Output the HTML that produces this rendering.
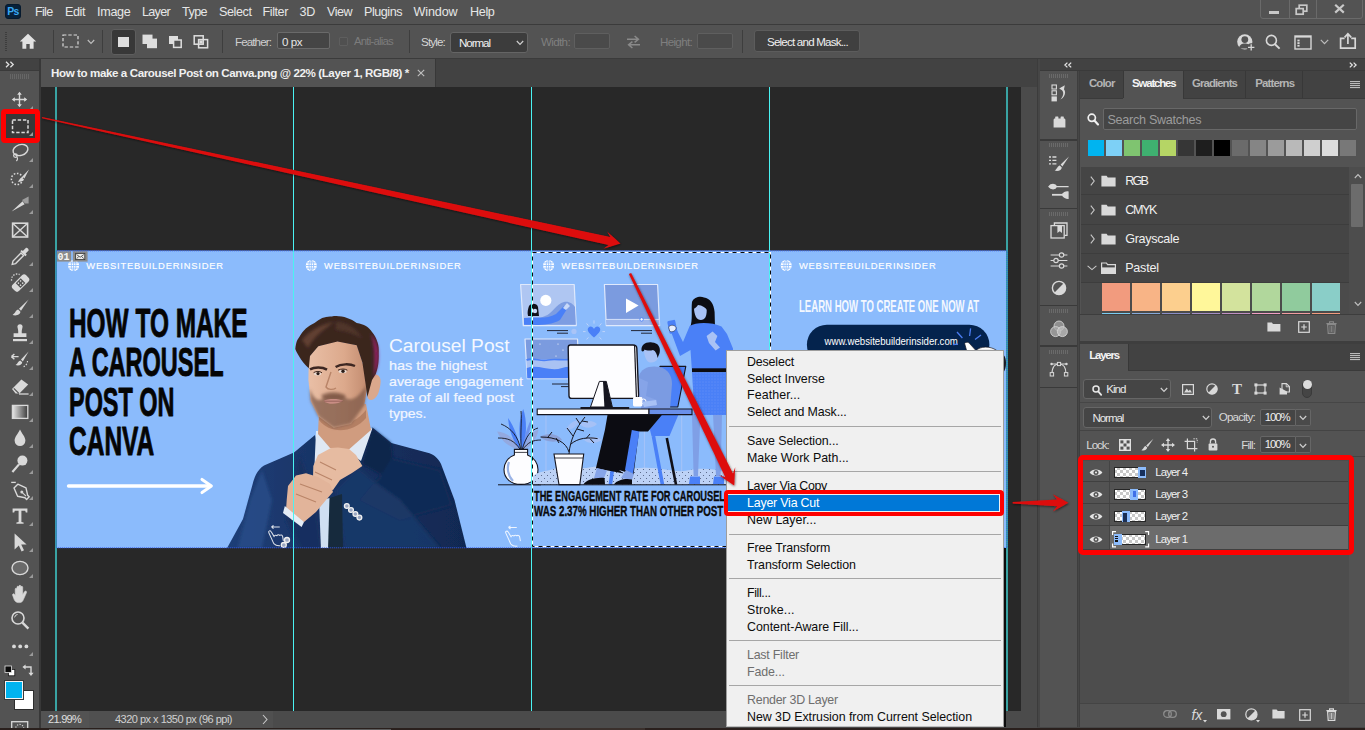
<!DOCTYPE html>
<html><head><meta charset="utf-8">
<style>
*{box-sizing:border-box;margin:0;padding:0}
html,body{width:1365px;height:730px;overflow:hidden;background:#535353;font-family:"Liberation Sans",sans-serif;}
.a{position:absolute}
#root{position:absolute;left:0;top:0;width:1365px;height:730px;overflow:hidden;background:#535353;color:#dcdcdc;font-size:13px}
.t{position:absolute;white-space:nowrap;line-height:1}
svg{position:absolute;overflow:visible}
</style></head><body>
<div id="root">
<!-- sec_top -->
<div class="a" style="left:0px;top:0px;width:1365px;height:24px;background:#535353;"></div>
<div class="a" style="left:5px;top:4px;width:16px;height:15px;background:#08213a;border-radius:3px;border:1px solid #061a2e"></div>
<div class="t" style="left:7.20px;top:7.00px;font-size:10.4px;color:#39a9f5;letter-spacing:-0.560px;font-weight:bold;">Ps</div>
<div class="t" style="left:35.00px;top:5.63px;font-size:12.6px;color:#e6e6e6;letter-spacing:-0.701px;">File</div>
<div class="t" style="left:65.00px;top:5.63px;font-size:12.6px;color:#e6e6e6;letter-spacing:-0.428px;">Edit</div>
<div class="t" style="left:97.00px;top:5.63px;font-size:12.6px;color:#e6e6e6;letter-spacing:-0.304px;">Image</div>
<div class="t" style="left:142.00px;top:5.63px;font-size:12.6px;color:#e6e6e6;letter-spacing:-0.704px;">Layer</div>
<div class="t" style="left:182.00px;top:5.63px;font-size:12.6px;color:#e6e6e6;letter-spacing:-0.579px;">Type</div>
<div class="t" style="left:219.00px;top:5.63px;font-size:12.6px;color:#e6e6e6;letter-spacing:-0.420px;">Select</div>
<div class="t" style="left:262.50px;top:5.63px;font-size:12.6px;color:#e6e6e6;letter-spacing:-0.417px;">Filter</div>
<div class="t" style="left:299.50px;top:5.63px;font-size:12.6px;color:#e6e6e6;letter-spacing:-0.303px;">3D</div>
<div class="t" style="left:327.00px;top:5.63px;font-size:12.6px;color:#e6e6e6;letter-spacing:-0.521px;">View</div>
<div class="t" style="left:364.00px;top:5.63px;font-size:12.6px;color:#e6e6e6;letter-spacing:-0.475px;">Plugins</div>
<div class="t" style="left:413.50px;top:5.63px;font-size:12.6px;color:#e6e6e6;letter-spacing:-0.136px;">Window</div>
<div class="t" style="left:470.00px;top:5.63px;font-size:12.6px;color:#e6e6e6;letter-spacing:-0.353px;">Help</div>
<div class="a" style="left:1260px;top:-3px;width:103px;height:22px;border:1px solid #6a6a6a;border-radius:3px"></div>
<div class="a" style="left:1288.5px;top:0px;width:1px;height:18px;background:#6a6a6a;"></div>
<div class="a" style="left:1315.5px;top:0px;width:1px;height:18px;background:#6a6a6a;"></div>
<div class="a" style="left:1269px;top:11px;width:10px;height:2.6px;background:#c8c8c8;"></div>
<svg style="left:1295px;top:4px" width="14" height="12" viewBox="0 0 14 12"><rect x="4.2" y="1.2" width="7.6" height="6" fill="none" stroke="#c8c8c8" stroke-width="1.7"/><rect x="1.2" y="4.6" width="7" height="5.6" fill="#535353" stroke="#c8c8c8" stroke-width="1.7"/></svg>
<svg style="left:1334px;top:4px" width="12" height="10" viewBox="0 0 12 10"><path d="M1.2 0.8L9.8 8.6M9.8 0.8L1.2 8.6" stroke="#c8c8c8" stroke-width="2.2" fill="none"/></svg>
<div class="a" style="left:0px;top:24px;width:1365px;height:1px;background:#3b3b3b;"></div>
<div class="a" style="left:0px;top:58px;width:1365px;height:1px;background:#3b3b3b;"></div>
<div class="a" style="left:5px;top:32px;width:2px;height:19px;background:repeating-linear-gradient(#3d3d3d 0 1px,transparent 1px 2px)"></div>
<svg style="left:19px;top:33px" width="18" height="17" viewBox="0 0 18 17"><path d="M9 0.8L0.8 8.6H3.4V15.8H7.3V11H10.7V15.8H14.6V8.6H17.2Z" fill="#e2e2e2"/></svg>
<div class="a" style="left:53px;top:30px;width:1px;height:23px;background:#3e3e3e;"></div>
<svg style="left:62px;top:34px" width="17" height="14" viewBox="0 0 17 14"><rect x="1" y="1" width="15" height="12" fill="none" stroke="#dcdcdc" stroke-width="1.2" stroke-dasharray="3.4 1.9"/></svg>
<svg style="left:87px;top:39px" width="8" height="6" viewBox="0 0 8 6"><path d="M0.8 1L4 4.4L7.2 1" stroke="#bdbdbd" stroke-width="1.2" fill="none"/></svg>
<div class="a" style="left:102px;top:30px;width:1px;height:23px;background:#3e3e3e;"></div>
<div class="a" style="left:111px;top:29px;width:25px;height:26px;background:#383838;border-radius:3px;border:1px solid #5e5e5e"></div>
<div class="a" style="left:118px;top:37px;width:11px;height:10px;background:#dedede;"></div>
<svg style="left:142px;top:34px" width="16" height="15" viewBox="0 0 16 15"><rect x="0.5" y="0.6" width="10" height="9.4" fill="#dedede"/><rect x="5" y="4.6" width="10" height="9.6" fill="#dedede"/></svg>
<svg style="left:168px;top:34px" width="15" height="15" viewBox="0 0 15 15"><rect x="1" y="2" width="9" height="8" fill="#dedede"/><rect x="5.6" y="6" width="7.6" height="7.4" fill="#535353" stroke="#dedede" stroke-width="1.5"/></svg>
<svg style="left:193px;top:34px" width="16" height="15" viewBox="0 0 16 15"><rect x="1.2" y="1.8" width="9" height="8.4" fill="none" stroke="#dedede" stroke-width="1.5"/><rect x="5.6" y="5.6" width="9" height="8.2" fill="none" stroke="#dedede" stroke-width="1.5"/><rect x="6.4" y="6.4" width="3.2" height="3.2" fill="#dedede"/></svg>
<div class="a" style="left:222px;top:30px;width:1px;height:23px;background:#3e3e3e;"></div>
<div class="t" style="left:235.00px;top:35.98px;font-size:11.6px;color:#cfcfcf;letter-spacing:-0.900px;">Feather:</div>
<div class="a" style="left:277px;top:32px;width:53px;height:17px;background:#454545;border:1px solid #6a6a6a;border-radius:2px"></div>
<div class="t" style="left:282.00px;top:35.78px;font-size:11.6px;color:#e6e6e6;letter-spacing:-0.481px;">0 px</div>
<div class="a" style="left:339px;top:37px;width:9px;height:9px;border:1px solid #5e5e5e;border-radius:1px;background:#505050"></div>
<div class="t" style="left:354.00px;top:35.95px;font-size:11.4px;color:#7c7c7c;letter-spacing:-0.789px;">Anti-alias</div>
<div class="a" style="left:409px;top:30px;width:1px;height:23px;background:#3e3e3e;"></div>
<div class="t" style="left:421.00px;top:35.78px;font-size:11.6px;color:#d6d6d6;letter-spacing:-0.835px;">Style:</div>
<div class="a" style="left:450.4px;top:32px;width:77.2px;height:21px;background:#3c3c3c;border:1px solid #656565;border-radius:3px"></div>
<div class="t" style="left:459.00px;top:36.58px;font-size:11.6px;color:#f0f0f0;letter-spacing:-1.064px;">Normal</div>
<svg style="left:516px;top:40px" width="8" height="6" viewBox="0 0 8 6"><path d="M0.8 1L4 4.4L7.2 1" stroke="#cfcfcf" stroke-width="1.2" fill="none"/></svg>
<div class="t" style="left:541.00px;top:35.78px;font-size:11.6px;color:#7f7f7f;letter-spacing:-0.646px;">Width:</div>
<div class="a" style="left:574px;top:33px;width:36px;height:16px;background:#4a4a4a;border:1px solid #5f5f5f;border-radius:2px"></div>
<svg style="left:626px;top:35px" width="15" height="14" viewBox="0 0 15 14"><path d="M1 4.2H11.5M8.6 1L12.4 4.2L8.6 7.4" stroke="#8a8a8a" stroke-width="1.5" fill="none"/><path d="M14 9.8H3.5M6.4 6.6L2.6 9.8L6.4 13" stroke="#8a8a8a" stroke-width="1.5" fill="none"/></svg>
<div class="t" style="left:660.00px;top:35.78px;font-size:11.6px;color:#7f7f7f;letter-spacing:-0.679px;">Height:</div>
<div class="a" style="left:697px;top:33px;width:36px;height:16px;background:#4a4a4a;border:1px solid #5f5f5f;border-radius:2px"></div>
<div class="a" style="left:742px;top:30px;width:1px;height:23px;background:#3e3e3e;"></div>
<div class="a" style="left:754px;top:30px;width:106px;height:22px;background:#404040;border:1px solid #5c5c5c;border-radius:3px"></div>
<div class="t" style="left:767.00px;top:35.78px;font-size:11.6px;color:#f0f0f0;letter-spacing:-0.801px;">Select and Mask...</div>
<svg style="left:1236px;top:33px" width="20" height="19" viewBox="0 0 20 19"><circle cx="8.8" cy="8.8" r="7.6" fill="#d8d8d8"/><circle cx="8.8" cy="6.6" r="3.4" fill="#535353"/><path d="M2.8 15.4C3.6 11.4 6 10.4 8.8 10.4S14 11.4 14.8 15.4" fill="#535353"/><circle cx="15.2" cy="14.4" r="4.2" fill="#535353"/><path d="M15.2 11.2V17.6M12 14.4H18.4" stroke="#d8d8d8" stroke-width="1.3"/></svg>
<svg style="left:1265px;top:34px" width="16" height="16" viewBox="0 0 16 16"><circle cx="6.4" cy="6.4" r="5" fill="none" stroke="#d8d8d8" stroke-width="1.6"/><path d="M10 10.2L14.6 14.6" stroke="#d8d8d8" stroke-width="2"/></svg>
<svg style="left:1294px;top:35px" width="18" height="15" viewBox="0 0 18 15"><rect x="1" y="1" width="16" height="13" fill="none" stroke="#d8d8d8" stroke-width="1.4"/><rect x="1" y="1" width="16" height="1.6" fill="#d8d8d8"/><rect x="3.4" y="4.6" width="2.2" height="1.8" fill="#d8d8d8"/><rect x="3.4" y="7.2" width="2.2" height="1.8" fill="#d8d8d8"/><rect x="3.4" y="9.8" width="2.2" height="1.8" fill="#d8d8d8"/></svg>
<svg style="left:1320px;top:39px" width="9" height="6" viewBox="0 0 9 6"><path d="M0.8 0.8L4.5 4.6L8.2 0.8" stroke="#bdbdbd" stroke-width="1.2" fill="none"/></svg>
<svg style="left:1339px;top:32px" width="18" height="18" viewBox="0 0 18 18"><path d="M5.6 6.4H1.6V16.2H16.2V6.4H12.2" fill="none" stroke="#d8d8d8" stroke-width="1.7"/><path d="M8.9 12V2.2M5.6 5.4L8.9 1.8L12.2 5.4" fill="none" stroke="#d8d8d8" stroke-width="1.7"/></svg>
<div class="a" style="left:41px;top:59px;width:997px;height:28px;background:#424242;"></div>
<div class="a" style="left:41px;top:59px;width:394px;height:28px;background:#535353;"></div>
<div class="a" style="left:435px;top:59px;width:1px;height:28px;background:#383838;"></div>
<div class="t" style="left:51.00px;top:67.18px;font-size:11.6px;color:#f0f0f0;letter-spacing:-0.408px;font-weight:bold;">How to make a Carousel Post on Canva.png @ 22% (Layer 1, RGB/8) *</div>
<svg style="left:417px;top:69px" width="8" height="8" viewBox="0 0 8 8"><path d="M0.8 0.8L7.2 7.2M7.2 0.8L0.8 7.2" stroke="#c0c0c0" stroke-width="1.1" fill="none"/></svg>
<!-- sec_tools -->
<div class="a" style="left:0px;top:59px;width:41px;height:671px;background:#535353;"></div>
<div class="a" style="left:39px;top:59px;width:2px;height:671px;background:#383838;"></div>
<div class="a" style="left:0px;top:59px;width:39px;height:11px;background:#424242;"></div>
<div class="a" style="left:0px;top:70px;width:39px;height:1px;background:#3a3a3a;"></div>
<svg style="left:5px;top:61px" width="10" height="7" viewBox="0 0 10 7"><path d="M1 0.8L3.8 3.5L1 6.2M5.4 0.8L8.2 3.5L5.4 6.2" stroke="#e0e0e0" stroke-width="1.3" fill="none"/></svg>
<div class="a" style="left:10px;top:74px;width:20px;height:5px;background:repeating-linear-gradient(90deg,#666 0 1px,transparent 1px 2px)"></div>
<div class="a" style="left:3px;top:111px;width:35px;height:30px;background:#383838;"></div>
<svg style="left:10.75px;top:91.15px" width="17" height="17" viewBox="0 0 22 22"><path d="M11 2.6V19.4M2.6 11H19.4" stroke="#d9d9d9" stroke-width="1.8"/><path d="M11 1L14 5H8ZM11 21L14 17H8ZM1 11L5 8V14ZM21 11L17 8V14Z" fill="#d9d9d9"/></svg>
<svg style="left:29px;top:106.4px" width="4" height="4" viewBox="0 0 4 4"><path d="M4 0V4H0Z" fill="#9a9a9a"/></svg>
<svg style="left:8.5px;top:114.9px" width="22" height="22" viewBox="0 0 22 22"><rect x="3.5" y="5" width="15.5" height="12.5" fill="none" stroke="#d9d9d9" stroke-width="1.5" stroke-dasharray="3.4 1.8"/></svg>
<svg style="left:29px;top:132.4px" width="4" height="4" viewBox="0 0 4 4"><path d="M4 0V4H0Z" fill="#9a9a9a"/></svg>
<svg style="left:8.5px;top:140.9px" width="22" height="22" viewBox="0 0 22 22"><ellipse cx="11.5" cy="9" rx="7.6" ry="5.4" transform="rotate(-18 11.5 9)" fill="none" stroke="#d9d9d9" stroke-width="1.4"/><circle cx="6.4" cy="14.6" r="1.8" fill="none" stroke="#d9d9d9" stroke-width="1.2"/><path d="M7.6 16C9 17 8.6 18.8 7.4 20" fill="none" stroke="#d9d9d9" stroke-width="1.2"/></svg>
<svg style="left:29px;top:158.4px" width="4" height="4" viewBox="0 0 4 4"><path d="M4 0V4H0Z" fill="#9a9a9a"/></svg>
<svg style="left:8.5px;top:166.9px" width="22" height="22" viewBox="0 0 22 22"><circle cx="8" cy="12" r="5.6" fill="none" stroke="#d9d9d9" stroke-width="1.5" stroke-dasharray="1.6 1.6"/><path d="M20 2.6L13.4 9.6L15.4 11.4Z" fill="#d9d9d9"/><path d="M12.6 10.4C10.6 10.8 10.6 13.4 8.8 14.4C11.6 15.4 14.6 14 14.8 12.2Z" fill="#d9d9d9"/></svg>
<svg style="left:29px;top:184.4px" width="4" height="4" viewBox="0 0 4 4"><path d="M4 0V4H0Z" fill="#9a9a9a"/></svg>
<svg style="left:8.5px;top:192.9px" width="22" height="22" viewBox="0 0 22 22"><path d="M2.6 18.6L13.6 8.2L15.6 11.2Z" fill="#d9d9d9"/><path d="M13 7L19.6 3.6L19.6 10.6L16 10.6Z" fill="#9d9d9d"/></svg>
<svg style="left:29px;top:210.4px" width="4" height="4" viewBox="0 0 4 4"><path d="M4 0V4H0Z" fill="#9a9a9a"/></svg>
<svg style="left:8.5px;top:218.9px" width="22" height="22" viewBox="0 0 22 22"><rect x="3.6" y="4.2" width="15" height="13.8" fill="none" stroke="#d9d9d9" stroke-width="1.6"/><path d="M3.6 4.2L18.6 18M18.6 4.2L3.6 18" stroke="#d9d9d9" stroke-width="1.4"/></svg>
<svg style="left:8.5px;top:244.9px" width="22" height="22" viewBox="0 0 22 22"><path d="M3.2 19.4L4 16L12 8L14.6 10.6L6.6 18.6Z" fill="none" stroke="#d9d9d9" stroke-width="1.4"/><path d="M11.4 6.2L16.4 11.2L17.8 9.8L16.6 8.6L19.4 5.8C20.4 4.8 18 1.8 16.6 3.2L13.8 6L12.8 5Z" fill="#d9d9d9"/></svg>
<svg style="left:29px;top:262.4px" width="4" height="4" viewBox="0 0 4 4"><path d="M4 0V4H0Z" fill="#9a9a9a"/></svg>
<svg style="left:8.5px;top:270.9px" width="22" height="22" viewBox="0 0 22 22"><g transform="rotate(-45 11.5 12)"><rect x="2" y="7.6" width="19" height="9" rx="3" fill="#d9d9d9"/><rect x="8" y="8.8" width="7" height="6.6" fill="#535353"/><circle cx="10" cy="10.6" r="0.8" fill="#d9d9d9"/><circle cx="13" cy="10.6" r="0.8" fill="#d9d9d9"/><circle cx="10" cy="13.6" r="0.8" fill="#d9d9d9"/><circle cx="13" cy="13.6" r="0.8" fill="#d9d9d9"/></g><path d="M2.6 9.6A5.6 5.6 0 0 1 10.6 3.6" fill="none" stroke="#d9d9d9" stroke-width="1.3" stroke-dasharray="1.4 1.4"/></svg>
<svg style="left:29px;top:288.4px" width="4" height="4" viewBox="0 0 4 4"><path d="M4 0V4H0Z" fill="#9a9a9a"/></svg>
<svg style="left:8.5px;top:296.9px" width="22" height="22" viewBox="0 0 22 22"><path d="M19.6 2.4L10 11.8L12 13.8Z" fill="#d9d9d9"/><path d="M9.2 12.6C6.8 13 6.6 16 3.6 18C7.6 19.4 11.4 17.4 11.4 14.8Z" fill="#d9d9d9"/></svg>
<svg style="left:29px;top:314.4px" width="4" height="4" viewBox="0 0 4 4"><path d="M4 0V4H0Z" fill="#9a9a9a"/></svg>
<svg style="left:8.5px;top:322.9px" width="22" height="22" viewBox="0 0 22 22"><path d="M8.6 4.8A2.6 2.6 0 1 1 13.4 4.8C13 6.4 12.6 8 12.8 10.2H17.4V14H4.6V10.2H9.2C9.4 8 9 6.4 8.6 4.8Z" fill="#d9d9d9"/><rect x="4" y="16" width="14" height="2.2" fill="#d9d9d9"/></svg>
<svg style="left:29px;top:340.4px" width="4" height="4" viewBox="0 0 4 4"><path d="M4 0V4H0Z" fill="#9a9a9a"/></svg>
<svg style="left:8.5px;top:348.9px" width="22" height="22" viewBox="0 0 22 22"><path d="M19.6 2.6L12 10.6L13.8 12.4Z" fill="#d9d9d9"/><path d="M11.2 11.4C9.2 11.8 9 14.4 6.6 16C10 17.2 13.2 15.4 13.2 13.2Z" fill="#d9d9d9"/><path d="M2.4 7.6H9.6M2.4 7.6L5.4 5M2.4 7.6L5.4 10.2" stroke="#d9d9d9" stroke-width="1.4" fill="none"/><path d="M14.6 17.6A6 6 0 0 0 18.4 11" fill="none" stroke="#d9d9d9" stroke-width="1.2" stroke-dasharray="1.4 1.4"/></svg>
<svg style="left:29px;top:366.4px" width="4" height="4" viewBox="0 0 4 4"><path d="M4 0V4H0Z" fill="#9a9a9a"/></svg>
<svg style="left:8.5px;top:374.9px" width="22" height="22" viewBox="0 0 22 22"><path d="M3 14L12.4 4.6L19.2 9.6L10.4 18.6H6.6Z" fill="#d9d9d9"/><path d="M4.8 13.4L9.8 18.4" stroke="#535353" stroke-width="1.2"/><path d="M7.4 11L13 16.2" stroke="#535353" stroke-width="0"/><path d="M10 19H19.6" stroke="#d9d9d9" stroke-width="1.3"/></svg>
<svg style="left:29px;top:392.4px" width="4" height="4" viewBox="0 0 4 4"><path d="M4 0V4H0Z" fill="#9a9a9a"/></svg>
<svg style="left:8.5px;top:400.9px" width="22" height="22" viewBox="0 0 22 22"><defs><linearGradient id="gg" x1="0" x2="1"><stop offset="0" stop-color="#e8e8e8"/><stop offset="1" stop-color="#3c3c3c"/></linearGradient></defs><rect x="3.4" y="4.4" width="15.4" height="13" fill="url(#gg)" stroke="#d9d9d9" stroke-width="1.3"/></svg>
<svg style="left:29px;top:418.4px" width="4" height="4" viewBox="0 0 4 4"><path d="M4 0V4H0Z" fill="#9a9a9a"/></svg>
<svg style="left:8.5px;top:426.9px" width="22" height="22" viewBox="0 0 22 22"><path d="M11 2.6C13 7 16.4 10 16.4 13.6A5.4 5.4 0 0 1 5.6 13.6C5.6 10 9 7 11 2.6Z" fill="#d9d9d9"/></svg>
<svg style="left:29px;top:444.4px" width="4" height="4" viewBox="0 0 4 4"><path d="M4 0V4H0Z" fill="#9a9a9a"/></svg>
<svg style="left:8.5px;top:452.9px" width="22" height="22" viewBox="0 0 22 22"><circle cx="13.4" cy="7.6" r="5" fill="#d9d9d9"/><path d="M10 11.4L3.4 19" stroke="#d9d9d9" stroke-width="2.2"/></svg>
<svg style="left:29px;top:470.4px" width="4" height="4" viewBox="0 0 4 4"><path d="M4 0V4H0Z" fill="#9a9a9a"/></svg>
<svg style="left:8.5px;top:478.9px" width="22" height="22" viewBox="0 0 22 22"><path d="M8.8 5.2L17 8.8L18.6 16.2L20.2 17.8L17.6 20.4L16 18.8L8.6 17.2L5 9Z" fill="none" stroke="#d9d9d9" stroke-width="1.4" stroke-linejoin="round"/><circle cx="12.8" cy="13" r="1.5" fill="#d9d9d9"/><path d="M13.6 13.8L17 17.2" stroke="#d9d9d9" stroke-width="1.1"/><path d="M2.2 3.4H6.8" stroke="#d9d9d9" stroke-width="1.3"/></svg>
<svg style="left:29px;top:496.4px" width="4" height="4" viewBox="0 0 4 4"><path d="M4 0V4H0Z" fill="#9a9a9a"/></svg>
<svg style="left:8.5px;top:504.9px" width="22" height="22" viewBox="0 0 22 22"><path d="M3.6 3.6H18.4V7.4H16.8L16.2 5.8H12.4V17L14.6 17.6V18.8H7.4V17.6L9.6 17V5.8H5.8L5.2 7.4H3.6Z" fill="#d9d9d9"/></svg>
<svg style="left:29px;top:522.4px" width="4" height="4" viewBox="0 0 4 4"><path d="M4 0V4H0Z" fill="#9a9a9a"/></svg>
<svg style="left:8.5px;top:530.9px" width="22" height="22" viewBox="0 0 22 22"><path d="M5.6 2.4V18.4L9.8 14.4L12.6 20.4L15 19.2L12.2 13.4H17.6Z" fill="#d9d9d9"/></svg>
<svg style="left:29px;top:548.4px" width="4" height="4" viewBox="0 0 4 4"><path d="M4 0V4H0Z" fill="#9a9a9a"/></svg>
<svg style="left:8.5px;top:556.9px" width="22" height="22" viewBox="0 0 22 22"><ellipse cx="11" cy="11" rx="8" ry="6.6" fill="#6a6a6a" stroke="#d9d9d9" stroke-width="1.4"/></svg>
<svg style="left:29px;top:574.4px" width="4" height="4" viewBox="0 0 4 4"><path d="M4 0V4H0Z" fill="#9a9a9a"/></svg>
<svg style="left:8.5px;top:582.9px" width="22" height="22" viewBox="0 0 22 22"><path d="M6.2 12.6V6.2C6.2 4.8 8 4.8 8 6.2V10.4V4.2C8 2.8 9.9 2.8 9.9 4.2V10V3.4C9.9 2 11.8 2 11.8 3.4V10V4.4C11.8 3 13.7 3 13.7 4.4V11.4L15.6 8.6C16.4 7.4 18.2 8.4 17.4 9.8L14.4 16.6C13.6 18.6 12.6 19.6 10.6 19.6H9.4C7.4 19.6 6 18.4 5.2 16.6L3.6 12.2C3.2 10.8 5 10.2 5.6 11.6Z" fill="#d9d9d9" stroke="#d9d9d9" stroke-width="0.6" stroke-linejoin="round"/></svg>
<svg style="left:8.5px;top:608.9px" width="22" height="22" viewBox="0 0 22 22"><circle cx="9" cy="9" r="6" fill="none" stroke="#d9d9d9" stroke-width="1.6"/><path d="M13.4 13.6L19.4 19.6" stroke="#d9d9d9" stroke-width="2.4"/><path d="M5.6 8.4A3.6 3.6 0 0 1 8.6 5.4" stroke="#d9d9d9" stroke-width="1" fill="none"/></svg>
<svg style="left:8.5px;top:634.9px" width="22" height="22" viewBox="0 0 22 22"><circle cx="5" cy="11.4" r="1.9" fill="#d9d9d9"/><circle cx="11.2" cy="11.4" r="1.9" fill="#d9d9d9"/><circle cx="17.4" cy="11.4" r="1.9" fill="#d9d9d9"/></svg>
<svg style="left:29px;top:652.4px" width="4" height="4" viewBox="0 0 4 4"><path d="M4 0V4H0Z" fill="#9a9a9a"/></svg>
<svg style="left:4.4px;top:664.6px" width="12" height="12" viewBox="0 0 12 12"><rect x="4.4" y="4.4" width="6.4" height="6.4" fill="#fff" stroke="#1a1a1a" stroke-width="0.8"/><rect x="1" y="1" width="6.4" height="6.4" fill="#0a0a0a" stroke="#e0e0e0" stroke-width="0.8"/></svg>
<svg style="left:21.6px;top:664.2px" width="12" height="12" viewBox="0 0 12 12"><path d="M2.6 3H9V9.6" fill="none" stroke="#d9d9d9" stroke-width="1.4"/><path d="M0.4 3L3.6 0.4V5.6ZM9 12L6.4 8.8H11.6Z" fill="#d9d9d9"/></svg>
<div class="a" style="left:14.2px;top:690px;width:19.5px;height:19.5px;background:#fff;border:1px solid #2e2e2e"></div>
<div class="a" style="left:4.1px;top:680.2px;width:19.7px;height:19.5px;background:#00b3ef;border:1px solid #383838;box-shadow:inset 0 0 0 1px #f4f4f4"></div>
<svg style="left:11px;top:721px" width="17.4" height="10" viewBox="0 0 17.4 10"><rect x="0.7" y="0.7" width="16" height="13" fill="none" stroke="#d9d9d9" stroke-width="1.3"/><circle cx="8.7" cy="7.4" r="4" fill="none" stroke="#d9d9d9" stroke-width="1.2" stroke-dasharray="1.2 1.4"/></svg>
<!-- sec_canvas -->
<div class="a" style="left:41px;top:87px;width:980px;height:624px;background:#282828;"></div>
<div class="a" style="left:1021px;top:87px;width:17px;height:624px;background:#4b4b4b;"></div>
<div class="a" style="left:41px;top:711px;width:997px;height:17px;background:#4b4b4b;"></div>
<div class="a" style="left:41px;top:711px;width:48px;height:17px;background:#535353;"></div>
<div class="a" style="left:89px;top:711px;width:184px;height:17px;background:#505050;"></div>
<div class="t" style="left:48.00px;top:714.39px;font-size:11px;color:#e0e0e0;letter-spacing:-0.718px;">21.99%</div>
<div class="t" style="left:115.00px;top:714.39px;font-size:11px;color:#d0d0d0;letter-spacing:-0.510px;">4320 px x 1350 px (96 ppi)</div>
<svg style="left:262px;top:713.8px" width="6" height="11" viewBox="0 0 6 11"><path d="M1 1L5 5.5L1 10" stroke="#c8c8c8" stroke-width="1.1" fill="none"/></svg>
<svg style="left:0;top:0" width="1365" height="730" viewBox="0 0 1365 730" font-family="Liberation Sans, sans-serif">
<defs><clipPath id="cv"><rect x="41" y="87" width="980" height="624"/></clipPath><pattern id="dots" width="6" height="6" patternUnits="userSpaceOnUse"><rect width="6" height="6" fill="#bdd2f6"/><circle cx="1.5" cy="1.5" r="0.55" fill="#4b5a7a"/><circle cx="4.5" cy="4.5" r="0.55" fill="#4b5a7a"/></pattern><pattern id="sk" width="3" height="3" patternUnits="userSpaceOnUse"><rect width="3" height="3" fill="#4a80f7"/><circle cx="1" cy="1" r="0.45" fill="#86a8f8"/></pattern></defs>
<g clip-path="url(#cv)">
<rect x="56" y="250.6" width="951.4" height="297.4" fill="#8bbbfc"/>
<g><circle cx="73.6" cy="265.5" r="5.5" fill="#fff"/><g fill="none" stroke="#8bbbfc" stroke-width="0.8"><ellipse cx="73.6" cy="265.5" rx="2.3" ry="5"/><path d="M68.1 265.5H79.1M69 262.9H78.2M69 268.1H78.2M73.6 260V271"/></g></g><text x="86.3" y="268.7" textLength="136.8" lengthAdjust="spacing" font-size="9.4" fill="#fff"  stroke="#fff" stroke-width="0.15">WEBSITEBUILDERINSIDER</text>
<text x="69" y="336.6" textLength="178.5" lengthAdjust="spacingAndGlyphs" font-size="40.6" fill="#050505" font-weight="bold" stroke="#050505" stroke-width="0.9" stroke-linejoin="round">HOW TO MAKE</text>
<text x="69" y="376" textLength="154.5" lengthAdjust="spacingAndGlyphs" font-size="40.6" fill="#050505" font-weight="bold" stroke="#050505" stroke-width="0.9" stroke-linejoin="round">A CAROUSEL</text>
<text x="69" y="415.5" textLength="105.5" lengthAdjust="spacingAndGlyphs" font-size="40.6" fill="#050505" font-weight="bold" stroke="#050505" stroke-width="0.9" stroke-linejoin="round">POST ON</text>
<text x="69" y="455" textLength="85.3" lengthAdjust="spacingAndGlyphs" font-size="40.6" fill="#050505" font-weight="bold" stroke="#050505" stroke-width="0.9" stroke-linejoin="round">CANVA</text>
<path d="M68.5 486H210" stroke="#fff" stroke-width="3.4" stroke-linecap="round"/><path d="M202 479.4L211.4 486L202 492.6" fill="none" stroke="#fff" stroke-width="3" stroke-linecap="round" stroke-linejoin="round"/>
<defs><filter id="soft" x="-5%" y="-5%" width="110%" height="110%"><feGaussianBlur stdDeviation="0.7"/></filter><filter id="soft2" x="-10%" y="-10%" width="120%" height="120%"><feGaussianBlur stdDeviation="1.6"/></filter><linearGradient id="suitg" x1="0" x2="1"><stop offset="0" stop-color="#1f3f78"/><stop offset="0.45" stop-color="#173263"/><stop offset="1" stop-color="#112852"/></linearGradient><linearGradient id="faceg" x1="0" x2="1"><stop offset="0" stop-color="#e9bfa6"/><stop offset="0.6" stop-color="#dca98c"/><stop offset="1" stop-color="#c18a6e"/></linearGradient><clipPath id="imgclip"><rect x="56" y="250.6" width="951.4" height="297.4"/></clipPath></defs>
<g clip-path="url(#imgclip)"><g filter="url(#soft)">
<path d="M315 435L294 452.5L264 465.5C257 470 254 478 252.4 485L243 519L226 550H467L454.5 500L441 464C438 458 434 455 429.5 453.3L391.4 443L372.4 427.6L345 470L322 470Z" fill="url(#suitg)"/>
<g filter="url(#soft2)"><path d="M372 428L391 443L392.4 458L382 475L362 464Z" fill="#10254c"/><path d="M392 458L440 470L452 505L400 520L360 500L380 476Z" fill="#132a55" opacity="0.8"/><path d="M300 455L316 500L322 550H300L286 520Z" fill="#14305f" opacity="0.85"/><path d="M262 470L250 500L238 548L262 548L272 500Z" fill="#2a4f8c" opacity="0.7"/><path d="M336 490L358 468L372 480L400 500L440 548H345Z" fill="#1b3868" opacity="0.9"/></g>
<path d="M316 431L372.4 428.2L361 461L342 447L331 449L330.5 470L314.3 470Z" fill="#dfe8f4"/>
<path d="M319 500L330 498L329.5 550H321Z" fill="#cfdff2"/>
<path d="M329.5 498L342 494L343 550H328Z" fill="#152c3c"/>
<path d="M319 410L366 404L371 430L346 452L330 448L318 434Z" fill="#d09c7f"/>
<path d="M319 414C330 428 352 428 366 410L366 418C352 434 330 434 319 420Z" fill="#a87458" opacity="0.7"/>
<path d="M368 378C374 372 381 374 380.6 382C380 390 378 396 374 399C371 401 368 400 367.5 397Z" fill="#dba88c"/>
<path d="M308.8 357L318 346L337 341L357 345L362.4 362L368.2 382L364.3 404.7L351 424L333.7 427.7L318.3 416.2L310.7 401L308.4 380Z" fill="url(#faceg)"/>
<g filter="url(#soft2)"><path d="M309.6 388C313 398 318 402 322 399C328 394 340 394 346 398C352 402 360 396 367 384L364.3 405L351 424L333.7 428L318.3 416.4L310.7 401Z" fill="#7a5644" opacity="0.72"/><path d="M321 396C326 391 340 391 346 396L344 399H324Z" fill="#7a5442" opacity="0.8"/></g>
<path d="M323.5 401C328 398.4 338 398.4 343 400.6C338 404.6 328 405 323.5 401Z" fill="#c98d84"/><path d="M324 401.2H342.6" stroke="#8a5a52" stroke-width="0.8"/>
<path d="M331 372L326 387C328 390 333 390 336 388" stroke="#b98468" stroke-width="1.4" fill="none"/>
<path d="M310 369.4C314 367 322 366.6 327 369.6M335.6 367C341 363.6 350 363.6 355 366" stroke="#3d2820" stroke-width="2.4" fill="none"/>
<ellipse cx="317.6" cy="373.8" rx="3.6" ry="1.6" fill="#e9dcd4"/><ellipse cx="342.6" cy="371.4" rx="4" ry="1.7" fill="#e9dcd4"/><circle cx="318" cy="373.6" r="1.6" fill="#2a1c18"/><circle cx="343" cy="371.2" r="1.7" fill="#2a1c18"/>
<path d="M313.6 372.6C316 371 320 371 322 372.8M338 370.2C341 368.6 345 368.6 347.4 370.2" stroke="#3d2820" stroke-width="1" fill="none"/>
<path d="M295.3 349C296 343 297 340 299 337.6C303 330 308 326 314.5 323C320 318 326 316 331.8 316.5C340 315 350 318 356.7 323C364 324 369 327 372 332C377 338 379.5 346 378.7 353C379 362 378 368 375.8 374L372 380L367.4 397L365.6 384L362.4 362.5L356.7 345.3L337.5 341.4L318.3 346.2L310 356L308.8 368.3C304 364 298 356 295.3 349Z" fill="#3b261f"/>
<g filter="url(#soft2)"><path d="M302 340C310 330 322 324 334 322C326 328 314 336 308 348Z" fill="#6a4636" opacity="0.8"/><path d="M336 322C346 322 356 328 362 338C354 334 344 330 336 330Z" fill="#5a3a2c" opacity="0.7"/><path d="M371 334C378 342 380 352 377.6 366L373.6 378C375 362 375 346 371 334Z" fill="#a0206e" opacity="0.8"/></g>
<path d="M313.3 466L318 455L331 448L338 447.6L349 449L356 455L362.4 466L352 473L340 480L333 490L321 488L313 478Z" fill="#e6bba1"/>
<path d="M286.7 500L288 486L296 475.6L306 473.3L318 477L330 484L333 492L326 500L316 512L304 521.9L292 520L286 510Z" fill="#e2b49a"/>
<path d="M320 462L336 470M315 472L332 480M300 484L322 492M296 494L316 502" stroke="#b98468" stroke-width="1.1" fill="none"/>
<path d="M284.8 506L304 522L301.6 527L283 513Z" fill="#e4ecf6"/>
</g>
<circle cx="346.8" cy="506" r="2.4" fill="#9aa6c0" stroke="#f0f0f0" stroke-width="1.3"/>
<circle cx="351" cy="510" r="2.4" fill="#9aa6c0" stroke="#f0f0f0" stroke-width="1.3"/>
<circle cx="355.4" cy="514" r="2.4" fill="#9aa6c0" stroke="#f0f0f0" stroke-width="1.3"/>
<circle cx="359.4" cy="517.6" r="2.4" fill="#9aa6c0" stroke="#f0f0f0" stroke-width="1.3"/>
<circle cx="287" cy="540" r="2.5" fill="#9aa6c0" stroke="#f0f0f0" stroke-width="1.3"/><circle cx="283.8" cy="545" r="2.5" fill="#9aa6c0" stroke="#f0f0f0" stroke-width="1.3"/>
</g>
<g transform="translate(275.6 535.6) scale(1.3)" fill="none" stroke="#fff" stroke-width="0.8" opacity="0.85"><path d="M-3.2 -6.6H3.2M-3.2 -6.6L-1.6 -7.8M-3.2 -6.6L-1.6 -5.4"/><path d="M-1.4 6.2L-5.2 -2.2C-5.8 -3.6 -4.2 -4.4 -3.4 -3L-1.2 0.6C-0.6 -0.4 0.4 -0.6 1 0C1.6 -0.8 2.6 -0.8 3.2 -0.2C4 -0.8 5 -0.4 5.4 0.6L6 4M-1.4 6.2C0 7.6 2 8 3.6 7.8"/></g>
<g><circle cx="311.3" cy="265.5" r="5.5" fill="#fff"/><g fill="none" stroke="#8bbbfc" stroke-width="0.8"><ellipse cx="311.3" cy="265.5" rx="2.3" ry="5"/><path d="M305.8 265.5H316.8M306.7 262.9H315.9M306.7 268.1H315.9M311.3 260V271"/></g></g><text x="324" y="268.7" textLength="136.8" lengthAdjust="spacing" font-size="9.4" fill="#fff"  stroke="#fff" stroke-width="0.15">WEBSITEBUILDERINSIDER</text>
<text x="389" y="351.9" textLength="120.5" lengthAdjust="spacingAndGlyphs" font-size="18.8" fill="#f4f8ff"  >Carousel Post</text>
<text x="389" y="369.9" textLength="98" lengthAdjust="spacingAndGlyphs" font-size="13.6" fill="#f2f6ff"  stroke="#f2f6ff" stroke-width="0.2">has the highest</text>
<text x="389" y="386.2" textLength="134" lengthAdjust="spacingAndGlyphs" font-size="13.6" fill="#f2f6ff"  stroke="#f2f6ff" stroke-width="0.2">average engagement</text>
<text x="389" y="402.3" textLength="125" lengthAdjust="spacingAndGlyphs" font-size="13.6" fill="#f2f6ff"  stroke="#f2f6ff" stroke-width="0.2">rate of all feed post</text>
<text x="389" y="417.9" textLength="37.5" lengthAdjust="spacingAndGlyphs" font-size="13.6" fill="#f2f6ff"  stroke="#f2f6ff" stroke-width="0.2">types.</text>
<g><path d="M523.2 409C527 420 527 436 522.4 450C518 436 518.6 420 523.2 409Z" fill="#4a80f7"/><path d="M497.2 431.4C507 432 516 440 520.6 450C510 448 501 441 497.2 431.4Z" fill="#93a9e0"/><path d="M538.5 429.6C531 432 525 440 522.6 450C531 447 537 439 538.5 429.6Z" fill="#93a9e0"/><path d="M508 418C514 426 518 438 520.6 450C513 442 509 430 508 418Z" fill="#4a80f7"/><path d="M533 416C531 428 527 440 522.6 450C524 438 527 426 533 416Z" fill="#6d92ee"/><path d="M521 450C518 436 511 428 501 424M521.4 450C520 434 522 420 521 411M522 450C526 436 531 430 538 428M520.6 450C514 440 508 438 498 438M522.4 450C528 442 533 440 541 440" stroke="#15151f" stroke-width="0.9" fill="none"/><path d="M514.4 449.4H527.6V455C534.5 457.5 538 463.5 538 469.5C538 478.5 531 484.4 521 484.4C511 484.4 504 478.5 504 469.5C504 463.5 507.5 457.5 514.4 455Z" fill="#fdfdff" stroke="#15151f" stroke-width="1.1"/><path d="M509 462C506.6 468 508 476 513 481" stroke="#9ab3e6" stroke-width="2.2" fill="none"/><path d="M514 452.4H528" stroke="#15151f" stroke-width="0.8"/><path d="M498 484.8H541" stroke="#15151f" stroke-width="1"/></g>
<g transform="translate(512.6 536) scale(1.3)" fill="none" stroke="#fff" stroke-width="0.8" opacity="0.85"><path d="M-3.2 -6.6H3.2M-3.2 -6.6L-1.6 -7.8M-3.2 -6.6L-1.6 -5.4"/><path d="M-1.4 6.2L-5.2 -2.2C-5.8 -3.6 -4.2 -4.4 -3.4 -3L-1.2 0.6C-0.6 -0.4 0.4 -0.6 1 0C1.6 -0.8 2.6 -0.8 3.2 -0.2C4 -0.8 5 -0.4 5.4 0.6L6 4M-1.4 6.2C0 7.6 2 8 3.6 7.8"/></g>
<g><circle cx="548.6" cy="265.5" r="5.5" fill="#fff"/><g fill="none" stroke="#8bbbfc" stroke-width="0.8"><ellipse cx="548.6" cy="265.5" rx="2.3" ry="5"/><path d="M543.1 265.5H554.1M544 262.9H553.2M544 268.1H553.2M548.6 260V271"/></g></g><text x="561.3" y="268.7" textLength="136.8" lengthAdjust="spacing" font-size="9.4" fill="#fff"  stroke="#fff" stroke-width="0.15">WEBSITEBUILDERINSIDER</text>
<g stroke="#dfe9fc" stroke-width="1.2" stroke-linejoin="round">
<path d="M520.6 284.5H574.2L576.2 325.6H523.3Z" fill="#afc6f2"/>
<path d="M604.4 284.5H657.6L659.6 325.6H606.3Z" fill="#7b9bdf"/>
<path d="M525 339H577.5L579.5 378.7H527.3Z" fill="#7b9bdf"/>
</g>
<circle cx="545.8" cy="300.4" r="5.6" fill="#ffffff"/><path d="M545 316C552 314 556 304 564 302C569 301 573 304 575 307L575.8 324.8H524Z" fill="#7d9de2"/><path d="M524 318C534 316 546 320 556 314L564 306L567 309L560 320C550 326 536 325 524 324.8Z" fill="#4a80f7"/><path d="M563 308L567 303L570 306L566 310Z" fill="#c8d8f8"/><path d="M529 306C531 303 537 303 538 307L539 316H528C527 312 528 309 529 306Z" fill="#101018"/><circle cx="535" cy="311" r="2.2" fill="#c8d8f8"/>
<path d="M626 298.4V313L638.6 305.6Z" fill="#fff"/><path d="M606 319.6H659.4L659.6 325H606.3Z" fill="#9db6ec"/><path d="M606 319.4H659.2" stroke="#dfe9fc" stroke-width="0.9"/><circle cx="641.6" cy="319.4" r="1.7" fill="#fff" stroke="#4a80f7" stroke-width="0.9"/>
<path d="M526.4 361C540 358 560 360 578.6 359L579.4 378.2H527.3Z" fill="#a9c2f3"/><path d="M526.8 368C538 364 550 372 562 368C568 366 574 367 579 368L579.4 378.2H527.3Z" fill="#4a80f7"/><path d="M526.4 360C534 357 540 362 548 360C556 358 566 362 578.6 358" stroke="#4a80f7" stroke-width="1.6" fill="none"/><path d="M552 345A4 4 0 1 0 555 352.6A3.4 3.4 0 0 1 552 345Z" fill="#4a80f7"/><circle cx="558" cy="344" r="0.6" fill="#fff"/><circle cx="563" cy="350" r="0.6" fill="#fff"/><circle cx="540" cy="344" r="0.6" fill="#fff"/><circle cx="569" cy="346" r="0.6" fill="#fff"/><circle cx="556" cy="356" r="0.6" fill="#fff"/>
<path d="M547 330.6H568M557 333.2H568M631 330.6H652M641 333.2H652M552 384H572M561 386.6H572" stroke="#15151f" stroke-width="0.9"/><circle cx="574" cy="331.4" r="2.6" fill="#a9c4f7"/><circle cx="578" cy="384.8" r="2.6" fill="#5f86ea"/>
<path d="M594 337.4C588 332.4 586.6 329.4 588.6 327.4C590.6 325.8 593 326.8 594 329C595 326.8 597.4 325.8 599.4 327.4C601.4 329.4 600 332.4 594 337.4Z" fill="#4a80f7"/><path d="M594 320.4V323.6M586.6 323.4L588.4 325.6M601.4 323.4L599.6 325.6M583 331.6H585.6M605 331.6H602.4M586.6 339.4L588.4 337.4M601.4 339.4L599.6 337.4" stroke="#c3d6fa" stroke-width="0.9"/>
<path d="M546 414.6V484M644.4 414.6V484M681.7 414.6V484" stroke="#a9c4f7" stroke-width="0.9"/>
<path d="M533 484.6V476C540 470 548 472 556 468C566 466 580 470 592 467C606 464 622 470 640 468C660 466 676 474 690 470C704 467 716 470 727 472V484.6Z" fill="url(#dots)"/>
<path d="M692 414L700.4 414L698 476H693.6ZM713 414L722 414L720.6 476H716Z" fill="#7f9fe6"/><path d="M690 476.4H700V484H689ZM714 476.4H724V484H713Z" fill="#4a80f7"/>
<path d="M660 366.4H685.8L677.8 407H652Z" fill="#4a80f7" stroke="#15151f" stroke-width="1.1" stroke-linejoin="round"/>
<path d="M646.2 414.6H678.5L669.5 436H651.5Z" fill="#4a80f7"/>
<path d="M617.6 430L610.4 484.4M653.4 436L662.4 484.4" stroke="#4a80f7" stroke-width="3.6"/><path d="M666.8 438L676 484.4" stroke="#101018" stroke-width="2.6"/><path d="M636 432L628 470" stroke="#4a80f7" stroke-width="3"/>
<path d="M639 376C641 368 650 365 660 367C668 369 672 376 672 384L670 409H641Z" fill="#7b9be2"/>
<path d="M639 378C634 388 634 398 638 403L656 406L657 400L646 396L648 382Z" fill="#86a4e8"/>
<path d="M644 350C644 345 650 343 655 345C659 347 659.6 354 657.6 359C655.6 363 649 364 646.6 360C644.6 357 644 353 644 350Z" fill="#a9c2f5"/><path d="M641.6 351C640.6 344.6 646 341.6 652 342.4C658 342.6 661 347 659.6 353L657.6 358C657 354 655.6 351 653 350C650 351 646 350.6 644.6 349.4C644 351 643 352 641.6 351Z" fill="#101018"/>
<path d="M607.6 414.6H662.3L648 431.4H639L633.6 474.5L619 470L623.7 473.6L595.9 468.2L604.9 430Z" fill="#0c0c12"/><path d="M631.8 430L625 470L633 474L639.4 431.4Z" fill="#4a80f7"/>
<path d="M597 468L607 470.6L604 478H594ZM626 470L634 474L632 480L621 478Z" fill="#86a4e8"/><path d="M583.4 484.4C586 480 596 477 604.6 478L605 484.4ZM613.9 484.4C617 480 626 478 632 479.6L632 484.4Z" fill="#0c0c12"/>
<path d="M570.2 345H633C635.4 345 636.6 346 636.8 348L638.6 395C638.6 397.4 637.6 398.4 635.4 398.4H571.6C569.8 398.4 569 397.6 569 396L568.2 347.4C568.2 345.8 569 345 570.2 345Z" fill="#fdfdff" stroke="#15151f" stroke-width="1.4"/>
<path d="M634.6 346L636.4 397" stroke="#15151f" stroke-width="1.2"/>
<path d="M599.4 381.4H606.3L612.3 407H590.5Z" fill="#fdfdff" stroke="#15151f" stroke-width="1"/><path d="M603 381.4H606.3L612.3 407H604.4Z" fill="#15151f"/>
<path d="M580.5 408H629.2" stroke="#15151f" stroke-width="1.8"/>
<rect x="633" y="397" width="9.4" height="9.4" rx="1.4" fill="#fdfdff"/><circle cx="643.6" cy="401.4" r="2.4" fill="none" stroke="#fdfdff" stroke-width="1"/><path d="M642 402L656 400L657 405L644 407Z" fill="#a9c2f5"/>
<path d="M537.2 409H649V414.6H537.2Z" fill="#fdfdff" stroke="#15151f" stroke-width="1.1"/><path d="M649 409H692V414.6H649Z" fill="#6a90ea" stroke="#15151f" stroke-width="1.1"/>
<path d="M692 302C694 297 700 296 704 297.4C710 298 714 304 714.6 312L715 327.6L690 327.6C693 320 691 310 692 302Z" fill="#0c0c12"/>
<path d="M694 308C694 303 699 301 703 302C707 304 707.6 312 705.6 317C703.6 321 698 321 696 317C694.6 314 694 311 694 308Z" fill="#a9c2f5"/><path d="M692.6 309C692 302 698 299 703 300C708 301 710 306 709 312C706 308 702 305 698 305C696.6 307 694.6 309 692.6 309Z" fill="#0c0c12"/>
<path d="M689.7 326C696 322 712 322 721.5 326.6L727 334L733 348.5L733 372H692L690.5 350L680 356L670.4 330L675.6 327.6L683 342Z" fill="#4a80f7"/>
<rect x="668.4" y="320.4" width="8" height="13" rx="1.4" transform="rotate(-12 672 327)" fill="#4a80f7"/><path d="M668.6 327C670 324.6 675 324.6 676 327.6C676.6 330.6 672 333 669.6 331Z" fill="#e6eeff" stroke="#15151f" stroke-width="0.5"/>
<path d="M706.6 336L712.6 331.6L717.4 336L715 342L720 347.6L715.6 350.6L709 343Z" fill="#a9c2f5"/>
<rect x="692" y="368.3" width="35" height="4" fill="#0c0c12"/>
<path d="M692 372.3H727V415H694.6Z" fill="url(#sk)"/>
<path d="M540.3 436.8C548 432 558 434 562 440C554 443 545 442 540.3 436.8Z" fill="#8aa0d8"/><path d="M580 424C586 420 593 420 597 424C592 429 584 429 580 424Z" fill="#a9c2f5" opacity="0.9"/><path d="M584 440C590 436 598 436 602 440C596 444 588 444 584 440Z" fill="#a9c2f5" opacity="0.9"/><path d="M566 430C568 424 574 420 580 420C578 426 572 430 566 430Z" fill="#a9c2f5" opacity="0.8"/>
<path d="M569 454C570 440 576 428 585 417M569 452C566 442 556 437 540.6 437M571 444C578 438 588 437 597.6 438.6M573 436L567 428M577 429L584 431M580 424L576 418M582 421L588 422M548 437L552 432M556 438L559 443M586 438.6L590 434M590 438.6L594 443" stroke="#15151f" stroke-width="1" fill="none"/>
<path d="M554 454H583.7L579.8 484.6H559Z" fill="#fdfdff" stroke="#15151f" stroke-width="1.1"/><path d="M555 458H583" stroke="#15151f" stroke-width="0.8"/>
<path d="M533 484.8H726" stroke="#15151f" stroke-width="1"/>
<text x="534" y="500.6" textLength="191" lengthAdjust="spacingAndGlyphs" font-size="14.8" fill="#0a0a0a" font-weight="bold" stroke="#0a0a0a" stroke-width="0.35">THE ENGAGEMENT RATE FOR CAROUSEL</text>
<text x="534" y="515.9" textLength="189.3" lengthAdjust="spacingAndGlyphs" font-size="14.8" fill="#0a0a0a" font-weight="bold" stroke="#0a0a0a" stroke-width="0.35">WAS 2.37% HIGHER THAN OTHER POST</text>
<g><circle cx="786.2" cy="265.5" r="5.5" fill="#fff"/><g fill="none" stroke="#8bbbfc" stroke-width="0.8"><ellipse cx="786.2" cy="265.5" rx="2.3" ry="5"/><path d="M780.7 265.5H791.7M781.6 262.9H790.8M781.6 268.1H790.8M786.2 260V271"/></g></g><text x="798.9" y="268.7" textLength="136.8" lengthAdjust="spacing" font-size="9.4" fill="#fff"  stroke="#fff" stroke-width="0.15">WEBSITEBUILDERINSIDER</text>
<text x="799" y="312.4" textLength="180" lengthAdjust="spacingAndGlyphs" font-size="15.6" fill="#f4f8ff" font-weight="bold" >LEARN HOW TO CREATE ONE NOW AT</text>
<rect x="806.9" y="324.7" width="182.5" height="40" rx="20" fill="#04234d"/>
<text x="824.5" y="345" textLength="133.3" lengthAdjust="spacingAndGlyphs" font-size="10.4" fill="#fff"  >www.websitebuilderinsider.com</text>
<path d="M957 332L962.4 338M970.6 328.4L969.6 336M981 335L975 339.6M953 344.6L958 344.2" stroke="#4a7cf0" stroke-width="1.3"/><path d="M964.6 343.4C966 341.6 968.4 342 969.6 343.6L976 350.6H966.6Z" fill="#fff" stroke="#15151f" stroke-width="0.7"/><path d="M976 350.4C980 346.4 990 345.6 996.6 350.4Z" fill="#fff" stroke="#15151f" stroke-width="0.7"/><path d="M1003.6 355C1006.6 357 1007 368 1003.6 372Z" fill="#1a1a22"/>
<rect x="56.2" y="251.2" width="14.9" height="10.4" fill="#8b8b8b"/><rect x="72.9" y="251.2" width="14.7" height="10.4" fill="#8b8b8b"/>
<text x="57.6" y="260.4" textLength="12" lengthAdjust="spacingAndGlyphs" font-size="10" fill="#f6f6f6"  font-family="Liberation Mono" font-weight="bold">01</text>
<rect x="75.6" y="253.4" width="9.2" height="6.2" fill="#ececec" stroke="#3c3c3c" stroke-width="0.9"/><path d="M76.6 254.6L80.2 257.2L83.8 254.6M76.6 258.6L78.8 256.6M83.8 258.6L81.6 256.6" stroke="#3c3c3c" stroke-width="0.8" fill="none"/>
<rect x="55" y="87" width="2" height="624" fill="#39a3a3"/>
<rect x="293" y="87" width="1" height="624" fill="#4af2f2"/>
<rect x="531" y="87" width="1" height="624" fill="#4af2f2"/>
<rect x="769" y="87" width="1" height="624" fill="#4af2f2"/>
<rect x="1006" y="87" width="2" height="624" fill="#39a3a3"/>
<rect x="56.2" y="250.8" width="950.8" height="297" fill="none" stroke="#3558e8" stroke-width="1" stroke-dasharray="1 1"/>
<rect x="532.5" y="252.5" width="238" height="294" fill="none" stroke="#fff" stroke-width="1"/><rect x="532.5" y="252.5" width="238" height="294" fill="none" stroke="#0a0a0a" stroke-width="1" stroke-dasharray="4 4"/>
</g></svg>
<!-- sec_right -->
<div class="a" style="left:1037px;top:59px;width:328px;height:671px;background:#464646;"></div>
<div class="a" style="left:1037px;top:59px;width:1px;height:668px;background:#3c3c3c;"></div>
<div class="a" style="left:1080px;top:340.4px;width:285px;height:3.4px;background:#3e3e3e;"></div>
<div class="a" style="left:1040px;top:59px;width:325px;height:11px;background:#424242;"></div>
<svg style="left:1063.6px;top:61.8px" width="8" height="6" viewBox="0 0 8 6"><path d="M3.4 0.6L0.9 3L3.4 5.4M7.2 0.6L4.7 3L7.2 5.4" stroke="#e6e6e6" stroke-width="1.25" fill="none"/></svg>
<svg style="left:1349.4px;top:61.8px" width="8" height="6" viewBox="0 0 8 6"><path d="M0.8 0.6L3.3 3L0.8 5.4M4.6 0.6L7.1 3L4.6 5.4" stroke="#e6e6e6" stroke-width="1.25" fill="none"/></svg>
<div class="a" style="left:1040px;top:70px;width:325px;height:1px;background:#3a3a3a;"></div>
<div class="a" style="left:1077px;top:71px;width:1px;height:656px;background:#3e3e3e;"></div>
<div class="a" style="left:1079.4px;top:71px;width:0.8px;height:656px;background:#3e3e3e;"></div>
<div class="a" style="left:1040px;top:71px;width:37px;height:656px;background:#535353;"></div>
<div class="a" style="left:1040px;top:139px;width:37px;height:1.6px;background:#3a3a3a;"></div>
<div class="a" style="left:1040px;top:207.5px;width:37px;height:1.6px;background:#3a3a3a;"></div>
<div class="a" style="left:1040px;top:304.5px;width:37px;height:1.6px;background:#3a3a3a;"></div>
<div class="a" style="left:1040px;top:345px;width:37px;height:1.6px;background:#3a3a3a;"></div>
<div class="a" style="left:1040px;top:386.5px;width:37px;height:1.6px;background:#3a3a3a;"></div>
<div class="a" style="left:1049px;top:74px;width:20px;height:4px;background:repeating-linear-gradient(90deg,#6a6a6a 0 1px,transparent 1px 2px)"></div>
<div class="a" style="left:1049px;top:143px;width:20px;height:4px;background:repeating-linear-gradient(90deg,#6a6a6a 0 1px,transparent 1px 2px)"></div>
<div class="a" style="left:1049px;top:211.5px;width:20px;height:4px;background:repeating-linear-gradient(90deg,#6a6a6a 0 1px,transparent 1px 2px)"></div>
<div class="a" style="left:1049px;top:308.5px;width:20px;height:4px;background:repeating-linear-gradient(90deg,#6a6a6a 0 1px,transparent 1px 2px)"></div>
<div class="a" style="left:1049px;top:350px;width:20px;height:4px;background:repeating-linear-gradient(90deg,#6a6a6a 0 1px,transparent 1px 2px)"></div>
<svg style="left:1051.4px;top:84.4px" width="16" height="18" viewBox="0 0 16 18"><rect x="1" y="1" width="4.4" height="4" fill="none" stroke="#d9d9d9" stroke-width="1.1"/><rect x="1" y="6.8" width="4.4" height="4" fill="none" stroke="#d9d9d9" stroke-width="1.1"/><rect x="0.5" y="12.4" width="5.4" height="5" fill="#d9d9d9"/><path d="M10 3.2C15.6 5 15.6 12 9.4 15.6C13.2 11.4 13 7 10 5.4ZM8.2 4.6L13.8 1.2L12.6 7.2Z" fill="#d9d9d9"/></svg>
<svg style="left:1053px;top:116px" width="13" height="12" viewBox="0 0 13 12"><path d="M0.6 11.4V4C0.6 3 1.4 2.6 2.2 2.6V1C2.2 0.4 5.4 0.4 5.4 1V2.6H7.6V1C7.6 0.4 10.8 0.4 10.8 1V2.6C11.6 2.6 12.4 3 12.4 4V11.4Z" fill="#d9d9d9"/></svg>
<svg style="left:1048px;top:155px" width="22" height="18" viewBox="0 0 22 18"><path d="M1 2H3M4.4 2H8.4M1 5.4H3M4.4 5.4H8.4M1 8.8H3M4.4 8.8H8.4" stroke="#d9d9d9" stroke-width="1.3"/><path d="M21 1.6L12.6 9.6L14.4 11.6Z" fill="#d9d9d9"/><path d="M11.8 10.4C9.6 10.8 9.4 13.6 6.6 15.6C10.4 17 13.8 14.8 13.8 12.4Z" fill="#d9d9d9"/></svg>
<svg style="left:1048px;top:183px" width="22" height="17" viewBox="0 0 22 17"><path d="M1 3.6C3 0.8 7.4 0.8 8.4 3.6C7.4 6.4 3 6.4 1 3.6ZM8 3.6H20.6" fill="#d9d9d9" stroke="#d9d9d9" stroke-width="1.4"/><path d="M4 11.8H14" stroke="#d9d9d9" stroke-width="1.8"/><path d="M13.4 11.8C15.4 8.4 18.8 7.8 20.6 8.4V16C18.8 16.4 15.4 15.4 13.4 11.8Z" fill="#d9d9d9"/></svg>
<svg style="left:1050px;top:222px" width="18" height="17" viewBox="0 0 18 17"><path d="M4.4 3V1H17V13.4H14.6" fill="none" stroke="#d9d9d9" stroke-width="1.3"/><rect x="1" y="3.6" width="13.2" height="12.4" fill="none" stroke="#d9d9d9" stroke-width="1.3"/><path d="M7.4 3.6V11L9.7 9.2L12 11V3.6Z" fill="#d9d9d9"/></svg>
<svg style="left:1050px;top:252px" width="18" height="17" viewBox="0 0 18 17"><path d="M0.6 3H17.4M0.6 8.5H17.4M0.6 14H17.4" stroke="#d9d9d9" stroke-width="1.2"/><circle cx="11.6" cy="3" r="2.2" fill="#535353" stroke="#d9d9d9" stroke-width="1.2"/><circle cx="6" cy="8.5" r="2.2" fill="#535353" stroke="#d9d9d9" stroke-width="1.2"/><circle cx="11.6" cy="14" r="2.2" fill="#535353" stroke="#d9d9d9" stroke-width="1.2"/></svg>
<svg style="left:1051px;top:280px" width="16" height="16" viewBox="0 0 16 16"><circle cx="8" cy="8" r="6.6" fill="none" stroke="#d9d9d9" stroke-width="1.4"/><path d="M12.7 3.3A6.6 6.6 0 0 1 3.3 12.7Z" fill="#d9d9d9"/></svg>
<svg style="left:1050px;top:320px" width="18" height="18" viewBox="0 0 18 18"><circle cx="9" cy="6" r="5" fill="#8f8f8f" stroke="#d9d9d9" stroke-width="0.8"/><circle cx="5.6" cy="11.6" r="5" fill="#a8a8a8" fill-opacity="0.8" stroke="#d9d9d9" stroke-width="0.8"/><circle cx="12.4" cy="11.6" r="5" fill="#bdbdbd" fill-opacity="0.8" stroke="#d9d9d9" stroke-width="0.8"/></svg>
<svg style="left:1049px;top:361px" width="20" height="16" viewBox="0 0 20 16"><path d="M3 13C3 5 7 3 10 3S17 5 17 13" fill="none" stroke="#d9d9d9" stroke-width="1.2"/><path d="M3.4 3H16.6" stroke="#d9d9d9" stroke-width="1"/><rect x="8.4" y="1.4" width="3.2" height="3.2" fill="#535353" stroke="#d9d9d9" stroke-width="1"/><rect x="1.2" y="11.6" width="3.4" height="3.4" fill="#535353" stroke="#d9d9d9" stroke-width="1"/><rect x="15.4" y="11.6" width="3.4" height="3.4" fill="#535353" stroke="#d9d9d9" stroke-width="1"/><circle cx="2.6" cy="3" r="1.3" fill="#d9d9d9"/><circle cx="17.4" cy="3" r="1.3" fill="#d9d9d9"/></svg>
<div class="a" style="left:1080px;top:71px;width:285px;height:28px;background:#424242;"></div>
<div class="a" style="left:1080px;top:98px;width:285px;height:1px;background:#3a3a3a;"></div>
<div class="a" style="left:1080px;top:99px;width:285px;height:241.5px;background:#535353;"></div>
<div class="a" style="left:1123px;top:71px;width:60px;height:28px;background:#535353;"></div>
<div class="a" style="left:1122.5px;top:71px;width:1px;height:27px;background:#383838;"></div>
<div class="a" style="left:1183px;top:71px;width:1px;height:27px;background:#383838;"></div>
<div class="a" style="left:1245px;top:71px;width:1px;height:27px;background:#383838;"></div>
<div class="a" style="left:1302px;top:71px;width:1px;height:27px;background:#383838;"></div>
<div class="t" style="left:1089.00px;top:77.75px;font-size:11.4px;color:#b4b4b4;letter-spacing:-0.853px;font-weight:bold;">Color</div>
<div class="t" style="left:1132.00px;top:77.75px;font-size:11.4px;color:#f4f4f4;letter-spacing:-1.136px;font-weight:bold;">Swatches</div>
<div class="t" style="left:1192.00px;top:77.75px;font-size:11.4px;color:#b4b4b4;letter-spacing:-0.913px;font-weight:bold;">Gradients</div>
<div class="t" style="left:1255.30px;top:77.75px;font-size:11.4px;color:#b4b4b4;letter-spacing:-0.827px;font-weight:bold;">Patterns</div>
<svg style="left:1350px;top:81px" width="10" height="7" viewBox="0 0 10 7"><path d="M0 0.6H10M0 2.6H10M0 4.6H10M0 6.6H10" stroke="#c8c8c8" stroke-width="1"/></svg>
<svg style="left:1087px;top:113px" width="12" height="13" viewBox="0 0 12 13"><circle cx="4.8" cy="4.8" r="3.6" fill="none" stroke="#f0f0f0" stroke-width="1.7"/><path d="M7.4 7.6L11 11.4" stroke="#f0f0f0" stroke-width="2.2" stroke-linecap="round"/></svg>
<div class="a" style="left:1102.5px;top:108.3px;width:254px;height:21.3px;background:#454545;border:1px solid #686868;border-radius:2px"></div>
<div class="t" style="left:1107.40px;top:113.93px;font-size:12.6px;color:#9c9c9c;letter-spacing:-0.270px;">Search Swatches</div>
<div class="a" style="left:1087.8px;top:140px;width:16.2px;height:16px;background:#00b4f0;"></div>
<div class="a" style="left:1105.8px;top:140px;width:16.2px;height:16px;background:#7dd0f6;"></div>
<div class="a" style="left:1123.8px;top:140px;width:16.2px;height:16px;background:#7fc470;"></div>
<div class="a" style="left:1141.8px;top:140px;width:16.2px;height:16px;background:#3fb070;"></div>
<div class="a" style="left:1159.8px;top:140px;width:16.2px;height:16px;background:#b5d565;"></div>
<div class="a" style="left:1177.8px;top:140px;width:16.2px;height:16px;background:#363636;"></div>
<div class="a" style="left:1195.8px;top:140px;width:16.2px;height:16px;background:#1e1e1e;"></div>
<div class="a" style="left:1213.8px;top:140px;width:16.2px;height:16px;background:#000000;"></div>
<div class="a" style="left:1231.8px;top:140px;width:16.2px;height:16px;background:#6b6b6b;"></div>
<div class="a" style="left:1249.8px;top:140px;width:16.2px;height:16px;background:#858585;"></div>
<div class="a" style="left:1267.8px;top:140px;width:16.2px;height:16px;background:#9b9b9b;"></div>
<div class="a" style="left:1285.8px;top:140px;width:16.2px;height:16px;background:#b9b9b9;"></div>
<div class="a" style="left:1303.8px;top:140px;width:16.2px;height:16px;background:#cfcfcf;"></div>
<div class="a" style="left:1321.8px;top:140px;width:16.2px;height:16px;background:#dcdcdc;"></div>
<div class="a" style="left:1339.8px;top:140px;width:16.2px;height:16px;background:#787878;"></div>
<div class="a" style="left:1081px;top:166.5px;width:267.5px;height:148px;background:#454545;"></div>
<div class="a" style="left:1081px;top:283px;width:267.5px;height:31.4px;background:#4b4b4b;"></div>
<div class="a" style="left:1081px;top:194px;width:267.5px;height:1.2px;background:#3d3d3d;"></div>
<div class="a" style="left:1081px;top:223.5px;width:267.5px;height:1.2px;background:#3d3d3d;"></div>
<div class="a" style="left:1081px;top:252.8px;width:267.5px;height:1.2px;background:#3d3d3d;"></div>
<div class="a" style="left:1081px;top:281.8px;width:267.5px;height:1.2px;background:#3d3d3d;"></div>
<svg style="left:1089.6px;top:175.7px" width="5" height="10" viewBox="0 0 5 10"><path d="M0.8 0.6L4.2 5L0.8 9.4" stroke="#c8c8c8" stroke-width="1.1" fill="none"/></svg>
<svg style="left:1101px;top:174.7px" width="15" height="12" viewBox="0 0 15 12"><path d="M0.4 11.6V0.8H5.6L6.8 2.4H14.6V11.6Z" fill="#d9d9d9"/></svg>
<div class="t" style="left:1125.20px;top:175.03px;font-size:12.6px;color:#f0f0f0;letter-spacing:-1.768px;">RGB</div>
<svg style="left:1089.6px;top:204.7px" width="5" height="10" viewBox="0 0 5 10"><path d="M0.8 0.6L4.2 5L0.8 9.4" stroke="#c8c8c8" stroke-width="1.1" fill="none"/></svg>
<svg style="left:1101px;top:203.7px" width="15" height="12" viewBox="0 0 15 12"><path d="M0.4 11.6V0.8H5.6L6.8 2.4H14.6V11.6Z" fill="#d9d9d9"/></svg>
<div class="t" style="left:1125.20px;top:204.03px;font-size:12.6px;color:#f0f0f0;letter-spacing:-1.351px;">CMYK</div>
<svg style="left:1089.6px;top:233.7px" width="5" height="10" viewBox="0 0 5 10"><path d="M0.8 0.6L4.2 5L0.8 9.4" stroke="#c8c8c8" stroke-width="1.1" fill="none"/></svg>
<svg style="left:1101px;top:232.7px" width="15" height="12" viewBox="0 0 15 12"><path d="M0.4 11.6V0.8H5.6L6.8 2.4H14.6V11.6Z" fill="#d9d9d9"/></svg>
<div class="t" style="left:1125.20px;top:233.03px;font-size:12.6px;color:#f0f0f0;letter-spacing:-0.302px;">Grayscale</div>
<svg style="left:1087.4px;top:265.1px" width="10" height="6" viewBox="0 0 10 6"><path d="M0.6 0.8L5 4.6L9.4 0.8" stroke="#c8c8c8" stroke-width="1.1" fill="none"/></svg>
<svg style="left:1101px;top:261.7px" width="15" height="12" viewBox="0 0 15 12"><path d="M0.6 11.4V1H5.4L6.6 2.6H14.4V11.4Z" fill="none" stroke="#d9d9d9" stroke-width="1.2"/><path d="M0.6 11.4V5.4H14.4V11.4Z" fill="#d9d9d9"/></svg>
<div class="t" style="left:1125.20px;top:262.03px;font-size:12.6px;color:#f0f0f0;letter-spacing:-0.253px;">Pastel</div>
<div class="a" style="left:1101.5px;top:282.8px;width:28.4px;height:28.2px;background:#f29b7e;"></div>
<div class="a" style="left:1101.5px;top:312.7px;width:28.4px;height:1.6px;background:#7accf2;"></div>
<div class="a" style="left:1131.56px;top:282.8px;width:28.4px;height:28.2px;background:#f8b486;"></div>
<div class="a" style="left:1131.56px;top:312.7px;width:28.4px;height:1.6px;background:#86a9d9;"></div>
<div class="a" style="left:1161.62px;top:282.8px;width:28.4px;height:28.2px;background:#fccf8e;"></div>
<div class="a" style="left:1161.62px;top:312.7px;width:28.4px;height:1.6px;background:#8a8ec6;"></div>
<div class="a" style="left:1191.68px;top:282.8px;width:28.4px;height:28.2px;background:#fff79a;"></div>
<div class="a" style="left:1191.68px;top:312.7px;width:28.4px;height:1.6px;background:#a38ec4;"></div>
<div class="a" style="left:1221.74px;top:282.8px;width:28.4px;height:28.2px;background:#d3e39d;"></div>
<div class="a" style="left:1221.74px;top:312.7px;width:28.4px;height:1.6px;background:#c08fc2;"></div>
<div class="a" style="left:1251.8px;top:282.8px;width:28.4px;height:28.2px;background:#b1d79c;"></div>
<div class="a" style="left:1251.8px;top:312.7px;width:28.4px;height:1.6px;background:#f29ec4;"></div>
<div class="a" style="left:1281.86px;top:282.8px;width:28.4px;height:28.2px;background:#90cb9d;"></div>
<div class="a" style="left:1281.86px;top:312.7px;width:28.4px;height:1.6px;background:#f29ca0;"></div>
<div class="a" style="left:1311.92px;top:282.8px;width:28.4px;height:28.2px;background:#8acec8;"></div>
<div class="a" style="left:1311.92px;top:312.7px;width:28.4px;height:1.6px;background:#f29b7e;"></div>
<div class="a" style="left:1348.5px;top:166.5px;width:16.5px;height:148px;background:#4d4d4d;"></div>
<div class="a" style="left:1351px;top:183.5px;width:12px;height:43.5px;background:#6c6c6c;border-radius:1px"></div>
<svg style="left:1354px;top:173px" width="8" height="6" viewBox="0 0 8 6"><path d="M0.8 5L4 1.6L7.2 5" stroke="#c0c0c0" stroke-width="1.1" fill="none"/></svg>
<svg style="left:1354px;top:301px" width="8" height="6" viewBox="0 0 8 6"><path d="M0.8 1L4 4.4L7.2 1" stroke="#c0c0c0" stroke-width="1.1" fill="none"/></svg>
<div class="a" style="left:1080px;top:314.4px;width:285px;height:1px;background:#3d3d3d;"></div>
<svg style="left:1267.4px;top:321.9px" width="14" height="10" viewBox="0 0 14 10"><path d="M0.4 9.6V0.6H4.8L6 2H13.4V9.6Z" fill="#d9d9d9"/></svg>
<svg style="left:1297.6px;top:321.4px" width="12" height="12" viewBox="0 0 12 12"><rect x="0.7" y="0.7" width="10.6" height="10.6" fill="none" stroke="#d9d9d9" stroke-width="1.2"/><path d="M6 3.2V8.8M3.2 6H8.8" stroke="#d9d9d9" stroke-width="1.2"/></svg>
<svg style="left:1326.4px;top:320.6px" width="11" height="13" viewBox="0 0 11 13"><path d="M0.4 2.6H10.6M3.6 2.4V0.8H7.4V2.4" stroke="#8a8a8a" stroke-width="1.1" fill="none"/><path d="M1.6 3.6H9.4L8.8 12.4H2.2Z" fill="none" stroke="#8a8a8a" stroke-width="1.1"/><path d="M4 5V11M5.5 5V11M7 5V11" stroke="#8a8a8a" stroke-width="0.8"/></svg>
<div class="a" style="left:1080px;top:343.6px;width:285px;height:27px;background:#424242;"></div>
<div class="a" style="left:1080px;top:370px;width:285px;height:1px;background:#3a3a3a;"></div>
<div class="a" style="left:1080px;top:371px;width:285px;height:356px;background:#535353;"></div>
<div class="a" style="left:1080px;top:343.6px;width:47.5px;height:28px;background:#535353;"></div>
<div class="a" style="left:1127.5px;top:343.6px;width:1px;height:26.4px;background:#383838;"></div>
<div class="t" style="left:1089.20px;top:349.75px;font-size:11.4px;color:#f4f4f4;letter-spacing:-1.160px;font-weight:bold;">Layers</div>
<svg style="left:1350px;top:353px" width="10" height="7" viewBox="0 0 10 7"><path d="M0 0.6H10M0 2.6H10M0 4.6H10M0 6.6H10" stroke="#c8c8c8" stroke-width="1"/></svg>
<div class="a" style="left:1083px;top:379.3px;width:87.6px;height:20px;background:#454545;border:1px solid #666;border-radius:3px"></div>
<svg style="left:1091.6px;top:384.6px" width="10" height="11" viewBox="0 0 10 11"><circle cx="4" cy="4" r="3" fill="none" stroke="#e8e8e8" stroke-width="1.5"/><path d="M6.2 6.4L9.2 9.8" stroke="#e8e8e8" stroke-width="1.8" stroke-linecap="round"/></svg>
<div class="t" style="left:1106.20px;top:383.38px;font-size:11.6px;color:#e8e8e8;letter-spacing:-0.979px;">Kind</div>
<svg style="left:1160px;top:387.4px" width="8" height="6" viewBox="0 0 8 6"><path d="M0.8 1L4 4.4L7.2 1" stroke="#cfcfcf" stroke-width="1.2" fill="none"/></svg>
<svg style="left:1181.6px;top:383.6px" width="12" height="11" viewBox="0 0 12 11"><rect x="0.6" y="0.6" width="10.8" height="9.8" fill="none" stroke="#d9d9d9" stroke-width="1.2"/><path d="M2 8.6L4.8 4.6L6.6 7L8 5.6L10 8.6Z" fill="#d9d9d9"/></svg>
<svg style="left:1206.4px;top:383.2px" width="12" height="12" viewBox="0 0 12 12"><circle cx="6" cy="6" r="5.2" fill="none" stroke="#d9d9d9" stroke-width="1.2"/><path d="M9.7 2.3A5.2 5.2 0 0 1 2.3 9.7Z" fill="#d9d9d9"/></svg>
<div class="t" style="left:1232.00px;top:381.90px;font-size:15px;color:#d9d9d9;font-weight:bold;font-family:'Liberation Serif';">T</div>
<svg style="left:1254px;top:383px" width="13" height="12" viewBox="0 0 13 12"><rect x="2" y="2" width="9" height="8" fill="none" stroke="#d9d9d9" stroke-width="1.2"/><rect x="0.4" y="0.4" width="3" height="3" fill="#d9d9d9"/><rect x="9.6" y="0.4" width="3" height="3" fill="#d9d9d9"/><rect x="0.4" y="8.6" width="3" height="3" fill="#d9d9d9"/><rect x="9.6" y="8.6" width="3" height="3" fill="#d9d9d9"/></svg>
<svg style="left:1279.4px;top:383px" width="11" height="12" viewBox="0 0 11 12"><path d="M0.6 4.6V11.4H8V8.4" fill="#d9d9d9"/><path d="M3 0.6H7.4L10.4 3.6V9H3Z" fill="none" stroke="#d9d9d9" stroke-width="1.1"/><path d="M7.2 0.8V3.8H10.2" fill="none" stroke="#d9d9d9" stroke-width="0.9"/></svg>
<div class="a" style="left:1302px;top:379.6px;width:10px;height:18px;border-radius:5px;background:#454545;border:1px solid #3a3a3a"></div>
<div class="a" style="left:1302.6px;top:380px;width:9px;height:9px;border-radius:5px;background:#dcdcdc"></div>
<div class="a" style="left:1080px;top:402px;width:285px;height:1px;background:#464646;"></div>
<div class="a" style="left:1083px;top:407.4px;width:129.4px;height:20.2px;background:#454545;border:1px solid #666;border-radius:3px"></div>
<div class="t" style="left:1092.40px;top:412.08px;font-size:11.6px;color:#e8e8e8;letter-spacing:-1.064px;">Normal</div>
<svg style="left:1202px;top:415px" width="8" height="6" viewBox="0 0 8 6"><path d="M0.8 1L4 4.4L7.2 1" stroke="#cfcfcf" stroke-width="1.2" fill="none"/></svg>
<div class="t" style="left:1218.70px;top:411.38px;font-size:11.6px;color:#d8d8d8;letter-spacing:-0.781px;">Opacity:</div>
<div class="a" style="left:1259.8px;top:408.6px;width:36.4px;height:17.4px;background:#454545;border:1px solid #666;border-radius:2px 0 0 2px"></div>
<div class="a" style="left:1296px;top:408.6px;width:14.8px;height:17.4px;background:#4a4a4a;border:1px solid #666;border-left:none;border-radius:0 2px 2px 0"></div>
<div class="t" style="left:1264.80px;top:411.55px;font-size:11.4px;color:#f0f0f0;letter-spacing:-1.139px;">100%</div>
<svg style="left:1299.4px;top:415px" width="8" height="6" viewBox="0 0 8 6"><path d="M0.8 1L4 4.4L7.2 1" stroke="#cfcfcf" stroke-width="1.2" fill="none"/></svg>
<div class="a" style="left:1080px;top:430.4px;width:285px;height:1px;background:#444;"></div>
<div class="t" style="left:1086.30px;top:438.58px;font-size:11.6px;color:#d8d8d8;letter-spacing:-1.045px;">Lock:</div>
<svg style="left:1118.6px;top:439px" width="12" height="12" viewBox="0 0 12 12"><rect x="0.5" y="0.5" width="11" height="11" fill="#e0e0e0" stroke="#e0e0e0" stroke-width="1"/><rect x="1.4" y="1.4" width="3" height="3" fill="#535353"/><rect x="7.6" y="1.4" width="3" height="3" fill="#535353"/><rect x="4.5" y="4.5" width="3" height="3" fill="#535353"/><rect x="1.4" y="7.6" width="3" height="3" fill="#535353"/><rect x="7.6" y="7.6" width="3" height="3" fill="#535353"/></svg>
<svg style="left:1140.4px;top:438px" width="14" height="14" viewBox="0 0 14 14"><path d="M13.4 0.8L6.2 7.4L7.8 9Z" fill="#d9d9d9"/><path d="M5.6 8C3.8 8.4 3.8 10.6 1.4 12.2C4.4 13.2 7.2 11.6 7.2 9.6Z" fill="#d9d9d9"/></svg>
<svg style="left:1161.4px;top:438px" width="14" height="14" viewBox="0 0 14 14"><path d="M7 1.6V12.4M1.6 7H12.4" stroke="#d9d9d9" stroke-width="1.3"/><path d="M7 0L9.2 3H4.8ZM7 14L9.2 11H4.8ZM0 7L3 4.8V9.2ZM14 7L11 4.8V9.2Z" fill="#d9d9d9"/></svg>
<svg style="left:1184px;top:438px" width="14" height="14" viewBox="0 0 14 14"><path d="M3.4 0.6V10.6H13.4M0.6 3.4H10.6V13.4" fill="none" stroke="#d9d9d9" stroke-width="1.2"/><path d="M9.4 0.8L13.2 0.8L13.2 4.6" fill="none" stroke="#d9d9d9" stroke-width="1" stroke-dasharray="1.4 1"/></svg>
<svg style="left:1207.6px;top:438px" width="10" height="13" viewBox="0 0 10 13"><path d="M2.4 5.6V3.6A2.6 2.6 0 0 1 7.6 3.6V5.6" fill="none" stroke="#d9d9d9" stroke-width="1.3"/><rect x="0.6" y="5.6" width="8.8" height="7" rx="0.8" fill="#d9d9d9"/><circle cx="5" cy="8.8" r="1" fill="#535353"/></svg>
<div class="t" style="left:1241.30px;top:438.58px;font-size:11.6px;color:#d8d8d8;letter-spacing:-0.868px;">Fill:</div>
<div class="a" style="left:1259.8px;top:436.4px;width:36.4px;height:17px;background:#454545;border:1px solid #666;border-radius:2px 0 0 2px"></div>
<div class="a" style="left:1296px;top:436.4px;width:14.8px;height:17px;background:#4a4a4a;border:1px solid #666;border-left:none;border-radius:0 2px 2px 0"></div>
<div class="t" style="left:1264.80px;top:439.15px;font-size:11.4px;color:#f0f0f0;letter-spacing:-1.139px;">100%</div>
<svg style="left:1299.4px;top:442.6px" width="8" height="6" viewBox="0 0 8 6"><path d="M0.8 1L4 4.4L7.2 1" stroke="#cfcfcf" stroke-width="1.2" fill="none"/></svg>
<div class="a" style="left:1080px;top:456px;width:268.5px;height:246.5px;background:#4d4d4d;"></div>
<div class="a" style="left:1080px;top:455.5px;width:285px;height:1px;background:#444;"></div>
<div class="a" style="left:1080px;top:702.5px;width:285px;height:1px;background:#444;"></div>
<div class="a" style="left:1083.4px;top:461px;width:265px;height:20.2px;background:#535353;"></div>
<div class="a" style="left:1083.4px;top:481.2px;width:265px;height:1px;background:#404040;"></div>
<div class="a" style="left:1109px;top:461px;width:1px;height:20.2px;background:#444;"></div>
<svg style="left:1088.6px;top:468.2px" width="14" height="9" viewBox="0 0 14 9"><path d="M0.6 4.5C3 0.6 11 0.6 13.4 4.5C11 8.4 3 8.4 0.6 4.5Z" fill="#e4e4e4"/><circle cx="7" cy="4.5" r="2.5" fill="#535353"/><circle cx="7" cy="4.5" r="1.1" fill="#e4e4e4"/></svg>
<div class="a" style="left:1114.2px;top:467px;width:32px;height:11.2px;background-color:#fff;background-image:linear-gradient(45deg,#c8c8c8 25%,transparent 25%,transparent 75%,#c8c8c8 75%),linear-gradient(45deg,#c8c8c8 25%,transparent 25%,transparent 75%,#c8c8c8 75%);background-size:6px 6px;background-position:0 0,3px 3px;outline:1px solid #262626;outline-offset:-1px"></div>
<div class="a" style="left:1138.2px;top:467px;width:8px;height:11.2px;background:#8bbbfc;"></div>
<div class="a" style="left:1140.2px;top:470px;width:5px;height:6px;background:#16305e;"></div>
<div class="t" style="left:1155.20px;top:467.15px;font-size:11.4px;color:#f0f0f0;letter-spacing:-0.861px;">Layer 4</div>
<div class="a" style="left:1083.4px;top:482.2px;width:265px;height:21.2px;background:#535353;"></div>
<div class="a" style="left:1083.4px;top:503.4px;width:265px;height:1px;background:#404040;"></div>
<div class="a" style="left:1109px;top:482.2px;width:1px;height:21.2px;background:#444;"></div>
<svg style="left:1088.6px;top:489.9px" width="14" height="9" viewBox="0 0 14 9"><path d="M0.6 4.5C3 0.6 11 0.6 13.4 4.5C11 8.4 3 8.4 0.6 4.5Z" fill="#e4e4e4"/><circle cx="7" cy="4.5" r="2.5" fill="#535353"/><circle cx="7" cy="4.5" r="1.1" fill="#e4e4e4"/></svg>
<div class="a" style="left:1114.2px;top:488.7px;width:32px;height:11.2px;background-color:#fff;background-image:linear-gradient(45deg,#c8c8c8 25%,transparent 25%,transparent 75%,#c8c8c8 75%),linear-gradient(45deg,#c8c8c8 25%,transparent 25%,transparent 75%,#c8c8c8 75%);background-size:6px 6px;background-position:0 0,3px 3px;outline:1px solid #262626;outline-offset:-1px"></div>
<div class="a" style="left:1130.2px;top:488.7px;width:8px;height:11.2px;background:#8bbbfc;"></div>
<div class="a" style="left:1132.8px;top:491.3px;width:3.4px;height:5.6px;background:#3f6fe8;"></div>
<div class="t" style="left:1155.20px;top:488.85px;font-size:11.4px;color:#f0f0f0;letter-spacing:-0.861px;">Layer 3</div>
<div class="a" style="left:1083.4px;top:504.4px;width:265px;height:20.8px;background:#535353;"></div>
<div class="a" style="left:1083.4px;top:525.2px;width:265px;height:1px;background:#404040;"></div>
<div class="a" style="left:1109px;top:504.4px;width:1px;height:20.8px;background:#444;"></div>
<svg style="left:1088.6px;top:511.9px" width="14" height="9" viewBox="0 0 14 9"><path d="M0.6 4.5C3 0.6 11 0.6 13.4 4.5C11 8.4 3 8.4 0.6 4.5Z" fill="#e4e4e4"/><circle cx="7" cy="4.5" r="2.5" fill="#535353"/><circle cx="7" cy="4.5" r="1.1" fill="#e4e4e4"/></svg>
<div class="a" style="left:1114.2px;top:510.7px;width:32px;height:11.2px;background-color:#fff;background-image:linear-gradient(45deg,#c8c8c8 25%,transparent 25%,transparent 75%,#c8c8c8 75%),linear-gradient(45deg,#c8c8c8 25%,transparent 25%,transparent 75%,#c8c8c8 75%);background-size:6px 6px;background-position:0 0,3px 3px;outline:1px solid #262626;outline-offset:-1px"></div>
<div class="a" style="left:1122.2px;top:510.7px;width:8px;height:11.2px;background:#8bbbfc;"></div>
<div class="a" style="left:1123.2px;top:513.3px;width:4px;height:8.6px;background:#1b2f55;"></div>
<div class="t" style="left:1155.20px;top:510.85px;font-size:11.4px;color:#f0f0f0;letter-spacing:-0.861px;">Layer 2</div>
<div class="a" style="left:1083.4px;top:526.2px;width:265px;height:22.8px;background:#535353;"></div>
<div class="a" style="left:1109.6px;top:526.2px;width:238.8px;height:22.8px;background:#6c6c6c;"></div>
<div class="a" style="left:1083.4px;top:549px;width:265px;height:1px;background:#404040;"></div>
<div class="a" style="left:1109px;top:526.2px;width:1px;height:22.8px;background:#444;"></div>
<svg style="left:1088.6px;top:534.7px" width="14" height="9" viewBox="0 0 14 9"><path d="M0.6 4.5C3 0.6 11 0.6 13.4 4.5C11 8.4 3 8.4 0.6 4.5Z" fill="#e4e4e4"/><circle cx="7" cy="4.5" r="2.5" fill="#535353"/><circle cx="7" cy="4.5" r="1.1" fill="#e4e4e4"/></svg>
<div class="a" style="left:1114.2px;top:533.5px;width:32px;height:11.2px;background-color:#fff;background-image:linear-gradient(45deg,#c8c8c8 25%,transparent 25%,transparent 75%,#c8c8c8 75%),linear-gradient(45deg,#c8c8c8 25%,transparent 25%,transparent 75%,#c8c8c8 75%);background-size:6px 6px;background-position:0 0,3px 3px;outline:1px solid #262626;outline-offset:-1px"></div>
<div class="a" style="left:1114.2px;top:533.5px;width:8px;height:11.2px;background:#8bbbfc;"></div>
<div class="a" style="left:1115.2px;top:535.5px;width:3px;height:1.4px;background:#111;"></div>
<div class="a" style="left:1115.2px;top:537.9px;width:3px;height:1.4px;background:#111;"></div>
<div class="a" style="left:1115.2px;top:540.3px;width:2.4px;height:1.4px;background:#111;"></div>
<svg style="left:1111.6px;top:530.9px" width="37.2" height="16.4" viewBox="0 0 37.2 16.4"><path d="M0.6 4V0.6H4M33.2 0.6H36.6V4M36.6 12.4V15.8H33.2M4 15.8H0.6V12.4" fill="none" stroke="#fff" stroke-width="1.2"/></svg>
<div class="t" style="left:1155.20px;top:533.65px;font-size:11.4px;color:#f0f0f0;letter-spacing:-0.861px;">Layer 1</div>
<svg style="left:1163px;top:710.4px" width="14" height="8" viewBox="0 0 14 8"><rect x="0.7" y="0.7" width="7.6" height="6.6" rx="3.3" fill="none" stroke="#8c8c8c" stroke-width="1.3"/><rect x="5.7" y="0.7" width="7.6" height="6.6" rx="3.3" fill="none" stroke="#8c8c8c" stroke-width="1.3"/></svg>
<div class="t" style="left:1191.40px;top:707.55px;font-size:14px;color:#d9d9d9;letter-spacing:0.055px;font-style:italic;">fx</div>
<svg style="left:1203px;top:720px" width="4" height="3" viewBox="0 0 4 3"><path d="M0 0H4L2 2.6Z" fill="#d9d9d9"/></svg>
<svg style="left:1216.6px;top:709px" width="13.4" height="10.4" viewBox="0 0 13.4 10.4"><rect x="0" y="0" width="13.4" height="10.4" fill="#d9d9d9"/><circle cx="6.7" cy="5.2" r="2.9" fill="#535353"/></svg>
<svg style="left:1245px;top:708.4px" width="13" height="13" viewBox="0 0 13 13"><circle cx="6.4" cy="6.4" r="5.6" fill="none" stroke="#d9d9d9" stroke-width="1.2"/><path d="M10.4 2.4A5.6 5.6 0 0 1 2.4 10.4Z" fill="#d9d9d9"/></svg>
<svg style="left:1256px;top:720px" width="4" height="3" viewBox="0 0 4 3"><path d="M0 0H4L2 2.6Z" fill="#d9d9d9"/></svg>
<svg style="left:1272px;top:709px" width="13" height="10" viewBox="0 0 13 10"><path d="M0.4 9.6V0.6H4.6L5.8 2H12.6V9.6Z" fill="#d9d9d9"/></svg>
<svg style="left:1299.4px;top:708.6px" width="12" height="12" viewBox="0 0 12 12"><rect x="0.7" y="0.7" width="10.6" height="10.6" fill="none" stroke="#d9d9d9" stroke-width="1.2"/><path d="M6 3.2V8.8M3.2 6H8.8" stroke="#d9d9d9" stroke-width="1.2"/></svg>
<svg style="left:1326px;top:708px" width="11" height="13" viewBox="0 0 11 13"><path d="M0.4 2.6H10.6M3.6 2.4V0.8H7.4V2.4" stroke="#d9d9d9" stroke-width="1.2" fill="none"/><path d="M1.6 3.6H9.4L8.8 12.4H2.2Z" fill="none" stroke="#d9d9d9" stroke-width="1.2"/><path d="M4 5V11M5.5 5V11M7 5V11" stroke="#d9d9d9" stroke-width="0.8"/></svg>
<!-- sec_overlay -->
<div class="a" style="left:1003.6px;top:548px;width:2.2px;height:179px;background:#0c0c0c"></div>
<div class="a" style="left:725.6px;top:350px;width:278.4px;height:377px;background:#f0f0f0;border:1px solid #9d9d9d;border-bottom:1px solid #bdbdbd"></div>
<div class="a" style="left:728.5px;top:426.1px;width:272.5px;height:1px;background:#a6a6a6;"></div>
<div class="a" style="left:728.5px;top:471px;width:272.5px;height:1px;background:#a6a6a6;"></div>
<div class="a" style="left:728.5px;top:533.5px;width:272.5px;height:1px;background:#a6a6a6;"></div>
<div class="a" style="left:728.5px;top:577.5px;width:272.5px;height:1px;background:#a6a6a6;"></div>
<div class="a" style="left:728.5px;top:640px;width:272.5px;height:1px;background:#a6a6a6;"></div>
<div class="a" style="left:728.5px;top:684.9px;width:272.5px;height:1px;background:#a6a6a6;"></div>
<div class="a" style="left:728px;top:494.6px;width:271px;height:16px;background:#0078d7;"></div>
<div class="t" style="left:747.00px;top:355.50px;font-size:12.4px;color:#0c0c0c;letter-spacing:-0.155px;">Deselect</div>
<div class="t" style="left:747.00px;top:372.50px;font-size:12.4px;color:#0c0c0c;letter-spacing:-0.055px;">Select Inverse</div>
<div class="t" style="left:747.00px;top:389.30px;font-size:12.4px;color:#0c0c0c;letter-spacing:0.101px;">Feather...</div>
<div class="t" style="left:747.00px;top:406.30px;font-size:12.4px;color:#0c0c0c;letter-spacing:-0.128px;">Select and Mask...</div>
<div class="t" style="left:747.00px;top:434.50px;font-size:12.4px;color:#0c0c0c;letter-spacing:-0.080px;">Save Selection...</div>
<div class="t" style="left:747.00px;top:451.50px;font-size:12.4px;color:#0c0c0c;letter-spacing:0.008px;">Make Work Path...</div>
<div class="t" style="left:747.00px;top:479.50px;font-size:12.4px;color:#0c0c0c;letter-spacing:-0.325px;">Layer Via Copy</div>
<div class="t" style="left:747.00px;top:496.50px;font-size:12.4px;color:#ffffff;letter-spacing:-0.200px;">Layer Via Cut</div>
<div class="t" style="left:747.00px;top:513.50px;font-size:12.4px;color:#0c0c0c;letter-spacing:0.048px;">New Layer...</div>
<div class="t" style="left:747.00px;top:541.50px;font-size:12.4px;color:#0c0c0c;letter-spacing:-0.104px;">Free Transform</div>
<div class="t" style="left:747.00px;top:558.70px;font-size:12.4px;color:#0c0c0c;letter-spacing:-0.079px;">Transform Selection</div>
<div class="t" style="left:747.00px;top:586.70px;font-size:12.4px;color:#0c0c0c;letter-spacing:-0.368px;">Fill...</div>
<div class="t" style="left:747.00px;top:604.10px;font-size:12.4px;color:#0c0c0c;letter-spacing:0.170px;">Stroke...</div>
<div class="t" style="left:747.00px;top:621.30px;font-size:12.4px;color:#0c0c0c;letter-spacing:-0.014px;">Content-Aware Fill...</div>
<div class="t" style="left:747.00px;top:649.10px;font-size:12.4px;color:#6e6e6e;letter-spacing:-0.222px;">Last Filter</div>
<div class="t" style="left:747.00px;top:665.70px;font-size:12.4px;color:#6e6e6e;letter-spacing:-0.100px;">Fade...</div>
<div class="t" style="left:747.00px;top:694.10px;font-size:12.4px;color:#6e6e6e;letter-spacing:-0.229px;">Render 3D Layer</div>
<div class="t" style="left:747.00px;top:711.10px;font-size:12.4px;color:#0c0c0c;letter-spacing:-0.039px;">New 3D Extrusion from Current Selection</div>
<div class="a" style="left:723.8px;top:490.2px;width:279.8px;height:25.6px;border:4.8px solid #fe0000;border-radius:4px"></div>
<div class="a" style="left:1.4px;top:109.2px;width:39px;height:33.4px;border:5px solid #fe0000;border-radius:4px"></div>
<div class="a" style="left:1077.5px;top:455px;width:276.6px;height:100px;border:5.6px solid #fe0000;border-radius:5px"></div>
<svg style="left:0;top:0" width="1365" height="730" viewBox="0 0 1365 730">
<defs><filter id="sh" x="-5%" y="-5%" width="110%" height="110%"><feDropShadow dx="0.6" dy="1" stdDeviation="0.9" flood-color="#000" flood-opacity="0.55"/></filter></defs>
<g filter="url(#sh)" fill="#dd1010">
<polygon points="41.9,118.3 608.6,245.0 603.4,248.7 620.4,243.4 607.1,231.5 610.4,237.0 42.1,116.9"/>
<polygon points="628.9,273.9 725.3,477.2 719.1,475.2 734.2,485.6 735.2,467.3 733.0,473.4 631.1,272.9"/>
<polygon points="1012.6,503.6 1057.2,506.2 1052.8,511.4 1068.4,502.8 1052.8,494.2 1057.2,499.4 1012.6,502.0"/>
</g></svg>
<div class="a" style="left:0px;top:727.6px;width:1365px;height:2.4px;background:#2a201d;"></div>
<div class="a" style="left:49px;top:728.6px;width:342px;height:1.4px;background:#5c5c5c;"></div>
<div class="a" style="left:540px;top:727.6px;width:105px;height:2.4px;background:#3a302c;"></div>
</div>
</body></html>
